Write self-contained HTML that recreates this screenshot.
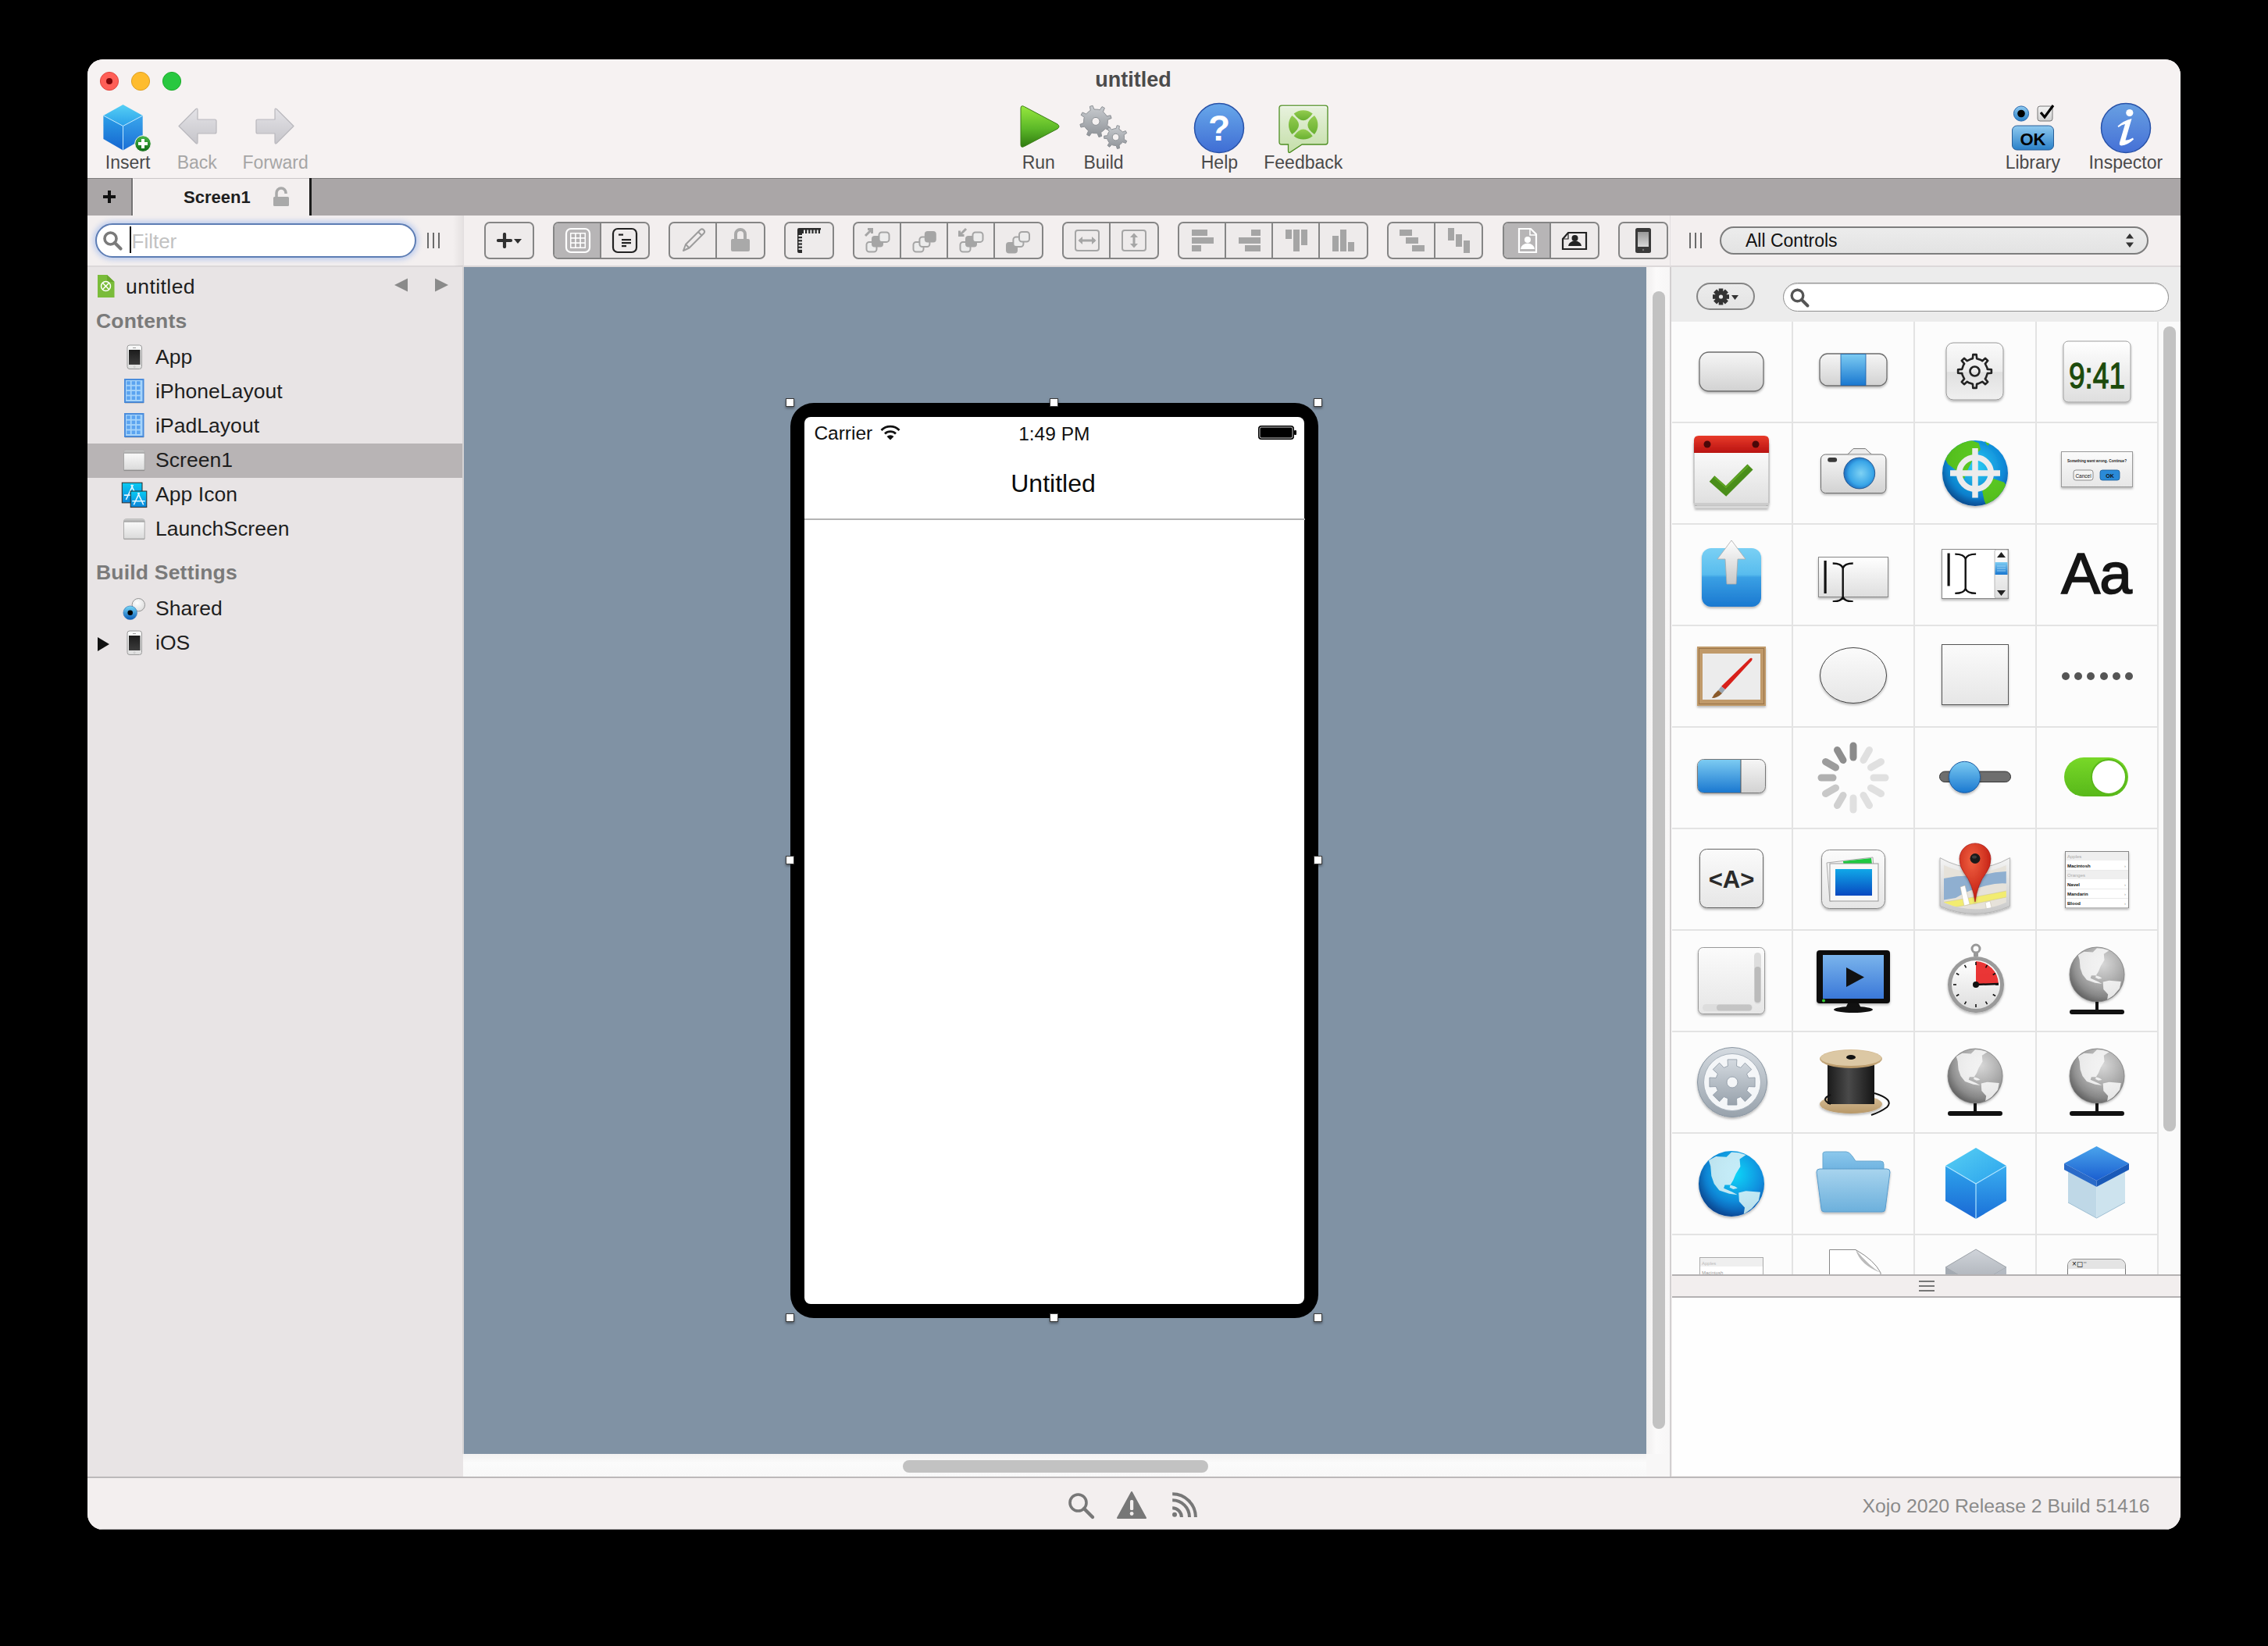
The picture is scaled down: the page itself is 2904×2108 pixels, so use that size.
<!DOCTYPE html>
<html><head><meta charset="utf-8">
<style>
html,body{margin:0;padding:0;background:#000;width:2904px;height:2108px;overflow:hidden}
*{box-sizing:border-box}
body{font-family:"Liberation Sans",sans-serif;color:#222}
.win{position:absolute;left:112px;top:76px;width:2680px;height:1883px;border-radius:20px;overflow:hidden;background:#f4f0f0}
.pg{position:absolute;left:-112px;top:-76px;width:2904px;height:2108px}
.a{position:absolute}
.t{position:absolute;white-space:nowrap;line-height:1}
svg text{font-family:"Liberation Sans",sans-serif}
</style></head><body>
<div class="win"><div class="pg">
<div class="a" style="left:112px;top:76px;width:2680px;height:152px;background:#f6f2f2"></div>
<svg class="a" style="left:126px;top:90px;" width="108" height="28" viewBox="0 0 108 28"><circle cx="14" cy="14" r="11.6" fill="#ff5f57" stroke="#e2463f" stroke-width="1"/><circle cx="14" cy="14" r="4" fill="#7e0508"/><circle cx="54" cy="14" r="11.6" fill="#febc2e" stroke="#dfa023" stroke-width="1"/><circle cx="94" cy="14" r="11.6" fill="#28c840" stroke="#1dad2b" stroke-width="1"/></svg>
<div class="t" style="left:951px;width:1000px;text-align:center;top:89.1px;font-size:27px;color:#4b4b4b;font-weight:bold;">untitled</div>
<div class="t" style="left:-336.4px;width:1000px;text-align:center;top:196.5px;font-size:23px;color:#4a4a4a;font-weight:normal;">Insert</div>
<div class="t" style="left:-247.8px;width:1000px;text-align:center;top:196.5px;font-size:23px;color:#a6a6a6;font-weight:normal;">Back</div>
<div class="t" style="left:-147.39999999999998px;width:1000px;text-align:center;top:196.5px;font-size:23px;color:#a6a6a6;font-weight:normal;">Forward</div>
<div class="t" style="left:829.8px;width:1000px;text-align:center;top:196.5px;font-size:23px;color:#4a4a4a;font-weight:normal;">Run</div>
<div class="t" style="left:913px;width:1000px;text-align:center;top:196.5px;font-size:23px;color:#4a4a4a;font-weight:normal;">Build</div>
<div class="t" style="left:1061.4px;width:1000px;text-align:center;top:196.5px;font-size:23px;color:#4a4a4a;font-weight:normal;">Help</div>
<div class="t" style="left:1168.8px;width:1000px;text-align:center;top:196.5px;font-size:23px;color:#4a4a4a;font-weight:normal;">Feedback</div>
<div class="t" style="left:2102.8px;width:1000px;text-align:center;top:196.5px;font-size:23px;color:#4a4a4a;font-weight:normal;">Library</div>
<div class="t" style="left:2221.8px;width:1000px;text-align:center;top:196.5px;font-size:23px;color:#4a4a4a;font-weight:normal;">Inspector</div>
<svg class="a" style="left:126px;top:128px;" width="70" height="72" viewBox="0 0 70 72"><defs><linearGradient id="cubeT" x1="0" y1="0" x2="0" y2="1"><stop offset="0" stop-color="#56d0f5"/><stop offset="1" stop-color="#2aa0ea"/></linearGradient><linearGradient id="cubeL" x1="0" y1="0" x2="0" y2="1"><stop offset="0" stop-color="#2c9fe8"/><stop offset="1" stop-color="#1565d0"/></linearGradient><linearGradient id="cubeR" x1="0" y1="0" x2="0" y2="1"><stop offset="0" stop-color="#3aa6ec"/><stop offset="1" stop-color="#1a6fd6"/></linearGradient><linearGradient id="plusG" x1="0" y1="0" x2="0" y2="1"><stop offset="0" stop-color="#4cb84a"/><stop offset="1" stop-color="#0d6a14"/></linearGradient></defs><polygon points="31.5,6 56.7,20 31.5,33.4 6.4,20" fill="url(#cubeT)"/><polygon points="6.4,20 31.5,33.4 31.5,64.5 6.4,50" fill="url(#cubeL)"/><polygon points="31.5,33.4 56.7,20 56.7,50 31.5,64.5" fill="url(#cubeR)"/><polyline points="6.4,20 31.5,33.4 56.7,20" fill="none" stroke="#bfe8ff" stroke-width="1"/><line x1="31.5" y1="33.4" x2="31.5" y2="64.5" stroke="#bfe8ff" stroke-width="1"/><circle cx="57" cy="56" r="10.3" fill="url(#plusG)" stroke="#f5f1f1" stroke-width="1"/><path d="M57 50v12M51 56h12" stroke="#fff" stroke-width="4"/></svg>
<svg class="a" style="left:226px;top:136px;" width="54" height="52" viewBox="0 0 54 52"><defs><linearGradient id="arG" x1="0" y1="0" x2="0" y2="1"><stop offset="0" stop-color="#e4e3e7"/><stop offset="1" stop-color="#c6c5ca"/></linearGradient></defs><path d="M3 25.5 L25 3.5 Q27 2 27 5 V17 H49 Q51 17 51 19 V33 Q51 35 49 35 H27 V46 Q27 49 25 47.5 Z" fill="url(#arG)" stroke="#b9b8bd" stroke-width="1.2" stroke-linejoin="round"/></svg>
<svg class="a" style="left:325px;top:136px;" width="54" height="52" viewBox="0 0 54 52"><path d="M51 25.5 L29 3.5 Q27 2 27 5 V17 H5 Q3 17 3 19 V33 Q3 35 5 35 H27 V46 Q27 49 29 47.5 Z" fill="url(#arG)" stroke="#b9b8bd" stroke-width="1.2" stroke-linejoin="round"/></svg>
<svg class="a" style="left:1303px;top:132px;" width="58" height="62" viewBox="0 0 58 62"><defs><linearGradient id="runG" x1="0" y1="0" x2="0" y2="1"><stop offset="0" stop-color="#97e83e"/><stop offset="0.55" stop-color="#5cb828"/><stop offset="1" stop-color="#2f7a10"/></linearGradient></defs><path d="M4 7 Q4 2 8.5 4.5 L51 27 Q55 30 51 33 L8.5 55.5 Q4 58 4 53 Z" fill="url(#runG)" stroke="#3c7d18" stroke-width="1"/></svg>
<svg class="a" style="left:1378px;top:130px;" width="70" height="64" viewBox="0 0 70 64"><defs><linearGradient id="gearG" x1="0" y1="0" x2="0" y2="1"><stop offset="0" stop-color="#c9ccd0"/><stop offset="1" stop-color="#8e9297"/></linearGradient></defs><polygon points="40.19,28.48 39.61,30.59 43.85,33.46 42.00,36.85 37.29,34.85 33.56,38.32 33.56,38.32 31.66,39.40 32.63,44.43 28.93,45.52 27.01,40.77 21.92,40.59 21.92,40.59 19.81,40.01 16.94,44.25 13.55,42.40 15.55,37.69 12.08,33.96 12.08,33.96 11.00,32.06 5.97,33.03 4.88,29.33 9.63,27.41 9.81,22.32 9.81,22.32 10.39,20.21 6.15,17.34 8.00,13.95 12.71,15.95 16.44,12.48 16.44,12.48 18.34,11.40 17.37,6.37 21.07,5.28 22.99,10.03 28.08,10.21 28.08,10.21 30.19,10.79 33.06,6.55 36.45,8.40 34.45,13.11 37.92,16.84 37.92,16.84 39.00,18.74 44.03,17.77 45.12,21.47 40.37,23.39 40.19,28.48" fill="url(#gearG)" stroke="#8d9196" stroke-width="1"/><circle cx="25" cy="25.4" r="5" fill="#f5f1f1" stroke="#8d9196" stroke-width="1"/><polygon points="61.55,46.70 61.23,48.44 64.77,50.51 63.40,53.42 59.55,52.00 56.57,54.84 56.57,54.84 55.00,55.68 55.60,59.74 52.46,60.48 51.18,56.58 47.09,56.03 47.09,56.03 45.46,55.33 42.66,58.33 40.12,56.34 42.37,52.90 40.26,49.36 40.26,49.36 39.79,47.65 35.70,47.33 35.67,44.10 39.76,43.72 41.22,39.86 41.22,39.86 42.26,38.43 39.96,35.03 42.47,33.00 45.31,35.95 49.24,34.69 49.24,34.69 51.01,34.61 52.23,30.69 55.38,31.38 54.85,35.45 58.28,37.73 58.28,37.73 59.45,39.07 63.28,37.58 64.70,40.47 61.18,42.59 61.55,46.70" fill="url(#gearG)" stroke="#8d9196" stroke-width="1"/><circle cx="50.6" cy="45.6" r="4.3" fill="#f5f1f1" stroke="#8d9196" stroke-width="1"/></svg>
<svg class="a" style="left:1527px;top:130px;" width="68" height="68" viewBox="0 0 68 68"><defs><linearGradient id="helpG" x1="0" y1="0" x2="0" y2="1"><stop offset="0" stop-color="#68a8ea"/><stop offset="1" stop-color="#3f6dd4"/></linearGradient></defs><circle cx="34" cy="34" r="31.5" fill="url(#helpG)" stroke="#2852a8" stroke-width="1.5"/><text x="34" y="50" text-anchor="middle" font-family="Liberation Sans" font-weight="bold" font-size="46" fill="#fff">?</text></svg>
<svg class="a" style="left:1636px;top:133px;" width="68" height="66" viewBox="0 0 68 66"><defs><linearGradient id="fbG" x1="0" y1="0" x2="0" y2="1"><stop offset="0" stop-color="#e8f2de"/><stop offset="1" stop-color="#c4dea8"/></linearGradient><linearGradient id="fbP" x1="0" y1="0" x2="0" y2="1"><stop offset="0" stop-color="#94cc50"/><stop offset="1" stop-color="#68b030"/></linearGradient></defs><path d="M5 2.2 H61 Q64 2.2 64 5.2 V49 Q64 52 61 52 H31.2 L15.5 62.4 Q13.5 62.8 13.5 60 V52 H5 Q2 52 2 49 V5.2 Q2 2.2 5 2.2 Z" fill="url(#fbG)" stroke="#4e8e22" stroke-width="1.3"/><path d="M5.5 3.6 H60.5 Q62.6 3.6 62.6 5.8" fill="none" stroke="#fff" stroke-width="1"/><path d="M20.68 12.57 A18.7 18.7 0 0 1 44.72 12.57 Q32.70 29.90 20.68 12.57 Z" fill="url(#fbP)"/><path d="M47.03 14.88 A18.7 18.7 0 0 1 47.03 38.92 Q29.70 26.90 47.03 14.88 Z" fill="url(#fbP)"/><path d="M44.72 41.23 A18.7 18.7 0 0 1 20.68 41.23 Q32.70 23.90 44.72 41.23 Z" fill="url(#fbP)"/><path d="M18.37 38.92 A18.7 18.7 0 0 1 18.37 14.88 Q35.70 26.90 18.37 38.92 Z" fill="url(#fbP)"/></svg>
<svg class="a" style="left:2572px;top:130px;" width="64" height="66" viewBox="0 0 64 66"><defs><linearGradient id="libB" x1="0" y1="0" x2="0" y2="1"><stop offset="0" stop-color="#8fcaf0"/><stop offset="1" stop-color="#2a80c8"/></linearGradient><linearGradient id="libC" x1="0" y1="0" x2="0" y2="1"><stop offset="0" stop-color="#f4f4f4"/><stop offset="1" stop-color="#cfcfcf"/></linearGradient></defs><circle cx="16" cy="15.5" r="9.6" fill="url(#libB)" stroke="#2a6ab0" stroke-width="1"/><circle cx="16" cy="15.5" r="4.8" fill="#000"/><rect x="37" y="6" width="19" height="19" rx="3" fill="url(#libC)" stroke="#777" stroke-width="1"/><path d="M41 14 L46 20 L57 5" fill="none" stroke="#000" stroke-width="3.2"/><rect x="4.5" y="31" width="53" height="31" rx="6" fill="url(#libB)" stroke="#2a5f98" stroke-width="1"/><text x="31" y="56" text-anchor="middle" font-family="Liberation Sans" font-weight="bold" font-size="22" fill="#000">OK</text></svg>
<svg class="a" style="left:2688px;top:130px;" width="68" height="68" viewBox="0 0 68 68"><defs><linearGradient id="insG" x1="0" y1="0" x2="0" y2="1"><stop offset="0" stop-color="#68a0e2"/><stop offset="1" stop-color="#4570d6"/></linearGradient></defs><circle cx="34" cy="34" r="31.5" fill="url(#insG)" stroke="#2852a8" stroke-width="1.5"/><circle cx="38.8" cy="14.5" r="4.6" fill="#fff"/><path d="M23.5 31.5 Q31 24.5 41.5 22 L33.5 49.5 Q37 50 43 46.5 L44 48.5 Q36 56 28.5 56.5 Q25 56.5 26 52.5 L33 29 Q29 29.5 24.5 33 Z" fill="#fff"/></svg>
<div class="a" style="left:112px;top:228px;width:2680px;height:48px;background:#aaa6a7"></div>
<div class="a" style="left:112px;top:228px;width:2680px;height:1px;background:#7d7b7b"></div>
<div class="a" style="left:168px;top:228px;width:2px;height:48px;background:#747273"></div>
<div class="a" style="left:170px;top:228px;width:226px;height:48px;background:#f3efef;border-top:1px solid #cbc7c8;border-left:1px solid #fcf9f9"></div>
<div class="a" style="left:396px;top:228px;width:2.5px;height:48px;background:#1c1c1c"></div>
<svg class="a" style="left:130px;top:242px;" width="20" height="20" viewBox="0 0 20 20"><path d="M10 2v16M2 10h16" stroke="#111" stroke-width="4"/></svg>
<div class="t" style="left:235px;top:242.4px;font-size:22px;color:#1e1e1e;font-weight:bold;">Screen1</div>
<svg class="a" style="left:348px;top:238px;" width="24" height="28" viewBox="0 0 24 28"><path d="M6 14 V9 A6 6 0 0 1 18 9 V10" fill="none" stroke="#a9a9a9" stroke-width="3.5"/><rect x="2" y="14" width="20" height="12" rx="1.5" fill="#a9a9a9"/></svg>
<div class="a" style="left:112px;top:276px;width:2680px;height:65px;background:#f3efef"></div>
<div class="a" style="left:112px;top:340px;width:2680px;height:2px;background:#dcd8d9"></div>
<div class="a" style="left:580px;top:276px;width:13px;height:65px;background:linear-gradient(to right,rgba(0,0,0,0),rgba(0,0,0,0.06))"></div>
<div class="a" style="left:593px;top:276px;width:1px;height:65px;background:#e2dedf"></div>
<div class="a" style="left:2138px;top:276px;width:1px;height:65px;background:#e2dedf"></div>
<div class="a" style="left:122px;top:286px;width:411px;height:44px;background:#fff;border:2px solid #5d7db4;border-radius:22px;box-shadow:0 0 6px 3px rgba(120,160,235,0.42)"></div>
<svg class="a" style="left:130px;top:294px;" width="30" height="30" viewBox="0 0 30 30"><circle cx="11.5" cy="11.5" r="7.5" fill="none" stroke="#7a7a7a" stroke-width="3.6"/><path d="M17 17 L24.5 24.5" stroke="#7a7a7a" stroke-width="4.2" stroke-linecap="round"/></svg>
<div class="a" style="left:166px;top:290px;width:2px;height:34px;background:#000"></div>
<div class="t" style="left:168.5px;top:296.0px;font-size:26px;color:#c2c2c2;font-weight:normal;">Filter</div>
<div class="a" style="left:547px;top:298px;width:2px;height:20px;background:#6b6b6b"></div>
<div class="a" style="left:554px;top:298px;width:2px;height:20px;background:#6b6b6b"></div>
<div class="a" style="left:561px;top:298px;width:2px;height:20px;background:#6b6b6b"></div>
<div class="a" style="left:2163px;top:298px;width:2px;height:20px;background:#6b6b6b"></div>
<div class="a" style="left:2170px;top:298px;width:2px;height:20px;background:#6b6b6b"></div>
<div class="a" style="left:2177px;top:298px;width:2px;height:20px;background:#6b6b6b"></div>
<div class="a" style="left:620px;top:284px;width:64px;height:48px;background:#eeebeb;border:2px solid #858585;border-radius:7px"></div>
<svg class="a" style="left:636px;top:298px;" width="36" height="20" viewBox="0 0 36 20"><path d="M10 2v16M2 10h16" stroke="#303030" stroke-width="4.2" stroke-linecap="round"/><path d="M22 8 H32 L27 14 Z" fill="#303030"/></svg>
<div class="a" style="left:708px;top:284px;width:124px;height:48px;background:#eeebeb;border:2px solid #858585;border-radius:7px;overflow:hidden"></div>
<div class="a" style="left:710px;top:286px;width:59px;height:44px;background:#b7b5b6;border-radius:5px 0 0 5px"></div>
<div class="a" style="left:768px;top:285px;width:2px;height:46px;background:#858585"></div>
<svg class="a" style="left:722px;top:290px;" width="36" height="36" viewBox="0 0 36 36"><rect x="3" y="3" width="30" height="30" rx="6" fill="none" stroke="#fff" stroke-width="2.2"/><rect x="8" y="8" width="20" height="20" fill="#fff"/><rect x="9.5" y="9.5" width="4.6" height="4.6" fill="#b2b0b1"/><rect x="9.5" y="15.7" width="4.6" height="4.6" fill="#b2b0b1"/><rect x="9.5" y="21.9" width="4.6" height="4.6" fill="#b2b0b1"/><rect x="15.7" y="9.5" width="4.6" height="4.6" fill="#b2b0b1"/><rect x="15.7" y="15.7" width="4.6" height="4.6" fill="#b2b0b1"/><rect x="15.7" y="21.9" width="4.6" height="4.6" fill="#b2b0b1"/><rect x="21.9" y="9.5" width="4.6" height="4.6" fill="#b2b0b1"/><rect x="21.9" y="15.7" width="4.6" height="4.6" fill="#b2b0b1"/><rect x="21.9" y="21.9" width="4.6" height="4.6" fill="#b2b0b1"/></svg>
<svg class="a" style="left:782px;top:290px;" width="36" height="36" viewBox="0 0 36 36"><rect x="3" y="3" width="30" height="30" rx="6" fill="none" stroke="#222" stroke-width="2.2"/><rect x="10" y="9.5" width="6" height="2.2" fill="#222"/><rect x="14" y="16" width="12" height="2.2" fill="#222"/><rect x="14" y="20" width="12" height="2.2" fill="#222"/><rect x="14" y="24" width="6" height="2.2" fill="#222"/></svg>
<div class="a" style="left:856px;top:284px;width:124px;height:48px;background:#eeebeb;border:2px solid #858585;border-radius:7px;overflow:hidden"></div>
<div class="a" style="left:916px;top:285px;width:2px;height:46px;background:#858585"></div>
<svg class="a" style="left:870px;top:290px;" width="36" height="36" viewBox="0 0 36 36"><path d="M5 31 L8 23 L27 4 Q29 2.5 31 4.5 Q33 6.5 31.5 8.5 L12.5 27.5 Z M8 23 L12.5 27.5 M24 7 L28.5 11.5" fill="none" stroke="#9c9c9c" stroke-width="2" stroke-linejoin="round"/></svg>
<svg class="a" style="left:932px;top:290px;" width="32" height="36" viewBox="0 0 32 36"><path d="M10 17 V10 A6 6 0 0 1 22 10 V17" fill="none" stroke="#a9a9a9" stroke-width="4"/><rect x="4" y="16" width="24" height="16" rx="2" fill="#a9a9a9"/></svg>
<div class="a" style="left:1004px;top:284px;width:64px;height:48px;background:#eeebeb;border:2px solid #858585;border-radius:7px"></div>
<svg class="a" style="left:1019px;top:291px;" width="34" height="34" viewBox="0 0 34 34"><path d="M2 3 Q2 1 4 1 H32 V8 H8 V33 H4 Q2 33 2 31 Z" fill="#2b2b2b"/><rect x="10.0" y="3.5" width="2" height="4.5" fill="#ececec"/><rect x="14.2" y="3.5" width="2" height="4.5" fill="#ececec"/><rect x="18.4" y="3.5" width="2" height="4.5" fill="#ececec"/><rect x="22.6" y="3.5" width="2" height="4.5" fill="#ececec"/><rect x="26.8" y="3.5" width="2" height="4.5" fill="#ececec"/><rect x="31.0" y="3.5" width="2" height="4.5" fill="#ececec"/><rect x="3.5" y="10.0" width="4.5" height="2" fill="#ececec"/><rect x="3.5" y="14.2" width="4.5" height="2" fill="#ececec"/><rect x="3.5" y="18.4" width="4.5" height="2" fill="#ececec"/><rect x="3.5" y="22.6" width="4.5" height="2" fill="#ececec"/><rect x="3.5" y="26.8" width="4.5" height="2" fill="#ececec"/></svg>
<div class="a" style="left:1092px;top:284px;width:244px;height:48px;background:#eeebeb;border:2px solid #858585;border-radius:7px;overflow:hidden"></div>
<div class="a" style="left:1152px;top:285px;width:2px;height:46px;background:#858585"></div>
<div class="a" style="left:1212px;top:285px;width:2px;height:46px;background:#858585"></div>
<div class="a" style="left:1272px;top:285px;width:2px;height:46px;background:#858585"></div>
<svg class="a" style="left:1104px;top:290px;" width="40" height="36" viewBox="0 0 40 36"><rect x="5.5" y="20" width="13" height="12.5" rx="3.5" fill="#ececec" stroke="#a5a5a5" stroke-width="2"/><rect x="12" y="12" width="15" height="14.5" rx="4" fill="#a5a5a5"/><rect x="21.5" y="7.4" width="13" height="12.5" rx="3.5" fill="#ececec" stroke="#a5a5a5" stroke-width="2"/><path d="M4 12 L12 4 M7 3.5 H12.5 V9" fill="none" stroke="#a5a5a5" stroke-width="3"/></svg>
<svg class="a" style="left:1164px;top:290px;" width="40" height="36" viewBox="0 0 40 36"><rect x="5.5" y="20" width="13" height="12.5" rx="3.5" fill="#ececec" stroke="#a5a5a5" stroke-width="2"/><rect x="13.4" y="13.5" width="13" height="12.5" rx="3.5" fill="#ececec" stroke="#a5a5a5" stroke-width="2"/><rect x="19.8" y="6" width="15" height="14.5" rx="4" fill="#a5a5a5"/></svg>
<svg class="a" style="left:1224px;top:290px;" width="40" height="36" viewBox="0 0 40 36"><rect x="5.5" y="20" width="13" height="12.5" rx="3.5" fill="#ececec" stroke="#a5a5a5" stroke-width="2"/><rect x="12" y="12" width="15" height="14.5" rx="4" fill="#a5a5a5"/><rect x="21.5" y="7.4" width="13" height="12.5" rx="3.5" fill="#ececec" stroke="#a5a5a5" stroke-width="2"/><path d="M13 3 L5 11 M4.5 5.5 V11.5 H10.5" fill="none" stroke="#a5a5a5" stroke-width="3"/></svg>
<svg class="a" style="left:1284px;top:290px;" width="40" height="36" viewBox="0 0 40 36"><rect x="4" y="20" width="15" height="14.5" rx="4" fill="#a5a5a5"/><rect x="13.4" y="13.5" width="13" height="12.5" rx="3.5" fill="#ececec" stroke="#a5a5a5" stroke-width="2"/><rect x="21" y="7" width="13" height="12.5" rx="3.5" fill="#ececec" stroke="#a5a5a5" stroke-width="2"/></svg>
<div class="a" style="left:1360px;top:284px;width:124px;height:48px;background:#eeebeb;border:2px solid #858585;border-radius:7px;overflow:hidden"></div>
<div class="a" style="left:1420px;top:285px;width:2px;height:46px;background:#858585"></div>
<svg class="a" style="left:1374px;top:292px;" width="36" height="32" viewBox="0 0 36 32"><rect x="3" y="3" width="30" height="26" rx="3" fill="none" stroke="#a5a5a5" stroke-width="2"/><path d="M8 16 H28" stroke="#a5a5a5" stroke-width="3"/><path d="M6.5 16 L12 11 V21 Z M29.5 16 L24 11 V21 Z" fill="#a5a5a5"/></svg>
<svg class="a" style="left:1434px;top:292px;" width="36" height="32" viewBox="0 0 36 32"><rect x="3" y="3" width="30" height="26" rx="3" fill="none" stroke="#a5a5a5" stroke-width="2"/><path d="M18 9 V23" stroke="#a5a5a5" stroke-width="3"/><path d="M18 6.5 L13 12 H23 Z M18 25.5 L13 20 H23 Z" fill="#a5a5a5"/></svg>
<div class="a" style="left:1508px;top:284px;width:244px;height:48px;background:#eeebeb;border:2px solid #858585;border-radius:7px;overflow:hidden"></div>
<div class="a" style="left:1568px;top:285px;width:2px;height:46px;background:#858585"></div>
<div class="a" style="left:1628px;top:285px;width:2px;height:46px;background:#858585"></div>
<div class="a" style="left:1688px;top:285px;width:2px;height:46px;background:#858585"></div>
<div class="a" style="left:1526px;top:294px;width:20px;height:8px;background:#a5a5a5"></div>
<div class="a" style="left:1526px;top:304px;width:28px;height:8px;background:#a5a5a5"></div>
<div class="a" style="left:1526px;top:314px;width:12px;height:8px;background:#a5a5a5"></div>
<div class="a" style="left:1602px;top:294px;width:12px;height:8px;background:#a5a5a5"></div>
<div class="a" style="left:1586px;top:304px;width:28px;height:8px;background:#a5a5a5"></div>
<div class="a" style="left:1594px;top:314px;width:20px;height:8px;background:#a5a5a5"></div>
<div class="a" style="left:1646px;top:294px;width:8px;height:12px;background:#a5a5a5"></div>
<div class="a" style="left:1656px;top:294px;width:8px;height:28px;background:#a5a5a5"></div>
<div class="a" style="left:1666px;top:294px;width:8px;height:20px;background:#a5a5a5"></div>
<div class="a" style="left:1706px;top:302px;width:8px;height:20px;background:#a5a5a5"></div>
<div class="a" style="left:1716px;top:294px;width:8px;height:28px;background:#a5a5a5"></div>
<div class="a" style="left:1726px;top:310px;width:8px;height:12px;background:#a5a5a5"></div>
<div class="a" style="left:1776px;top:284px;width:123px;height:48px;background:#eeebeb;border:2px solid #858585;border-radius:7px;overflow:hidden"></div>
<div class="a" style="left:1836px;top:285px;width:2px;height:46px;background:#858585"></div>
<div class="a" style="left:1792px;top:294px;width:16px;height:8px;background:#a5a5a5"></div>
<div class="a" style="left:1800px;top:304px;width:16px;height:8px;background:#a5a5a5"></div>
<div class="a" style="left:1808px;top:314px;width:16px;height:8px;background:#a5a5a5"></div>
<div class="a" style="left:1854px;top:292px;width:8px;height:16px;background:#a5a5a5"></div>
<div class="a" style="left:1864px;top:300px;width:8px;height:16px;background:#a5a5a5"></div>
<div class="a" style="left:1874px;top:308px;width:8px;height:16px;background:#a5a5a5"></div>
<div class="a" style="left:1924px;top:284px;width:124px;height:48px;background:#eeebeb;border:2px solid #858585;border-radius:7px;overflow:hidden"></div>
<div class="a" style="left:1926px;top:286px;width:59px;height:44px;background:#b7b5b6;border-radius:5px 0 0 5px"></div>
<div class="a" style="left:1984px;top:285px;width:2px;height:46px;background:#858585"></div>
<svg class="a" style="left:1942px;top:290px;" width="28" height="36" viewBox="0 0 28 36"><path d="M3 3 H18 L25 10 V33 H3 Z" fill="none" stroke="#fff" stroke-width="2.2"/><path d="M17 3 V11 H25" fill="none" stroke="#fff" stroke-width="1.5"/><circle cx="14" cy="17" r="4" fill="#fff"/><path d="M5 29 Q6 22 14 21.5 Q22 22 23 29 Z" fill="#fff"/></svg>
<svg class="a" style="left:1998px;top:294px;" width="36" height="28" viewBox="0 0 36 28"><path d="M3 12 L10 4 H33 V25 H3 Z" fill="none" stroke="#222" stroke-width="2.2"/><path d="M10 4 V12 H3" fill="none" stroke="#222" stroke-width="1.2"/><circle cx="18.5" cy="11" r="4" fill="#222"/><path d="M10 21 Q11 15 18.5 14.5 Q26 15 27 21 Z" fill="#222"/></svg>
<div class="a" style="left:2072px;top:284px;width:64px;height:48px;background:#eeebeb;border:2px solid #858585;border-radius:7px"></div>
<svg class="a" style="left:2092px;top:290px;" width="24" height="36" viewBox="0 0 24 36"><defs><linearGradient id="phS" x1="0" y1="0" x2="0" y2="1"><stop offset="0" stop-color="#9a9a9a"/><stop offset="1" stop-color="#d8d8d8"/></linearGradient></defs><rect x="2" y="2" width="20" height="32" rx="2.5" fill="#3a3a3a"/><rect x="5" y="7" width="14" height="19" fill="url(#phS)"/><circle cx="12" cy="30" r="1.2" fill="#777"/></svg>
<div class="a" style="left:2202px;top:290px;width:549px;height:36px;background:linear-gradient(#ececec,#e3e3e3);border:2px solid #7d7d7d;border-radius:18px"></div>
<div class="t" style="left:2235px;top:296.5px;font-size:23px;color:#111;font-weight:normal;">All Controls</div>
<svg class="a" style="left:2718px;top:296px;" width="18" height="24" viewBox="0 0 18 24"><path d="M9 3 L14 9.5 H4 Z M9 21 L14 14.5 H4 Z" fill="#333"/></svg>
<div class="a" style="left:112px;top:342px;width:481px;height:1550px;background:#e8e4e5"></div>
<svg class="a" style="left:124px;top:351px;" width="24" height="31" viewBox="0 0 24 31"><path d="M1 1 H13 L22.5 10 V30 H1 Z" fill="#7abc3a"/><path d="M13 1 L22.5 10 H16 Q13 10 13 7 Z" fill="#6aa82e"/><circle cx="11.5" cy="15.5" r="6" fill="none" stroke="#fff" stroke-width="1.5"/><path d="M7.3 11.3 L15.7 19.7 M15.7 11.3 L7.3 19.7" stroke="#fff" stroke-width="1.5"/></svg>
<div class="t" style="left:161px;top:353.6px;font-size:26.5px;color:#1e1e1e;font-weight:normal;letter-spacing:0.45px;">untitled</div>
<svg class="a" style="left:503px;top:354px;" width="22" height="22" viewBox="0 0 22 22"><path d="M2 11 L19 2.5 V19.5 Z" fill="#8a8a8a"/></svg>
<svg class="a" style="left:554px;top:354px;" width="22" height="22" viewBox="0 0 22 22"><path d="M20 11 L3 2.5 V19.5 Z" fill="#8a8a8a"/></svg>
<div class="t" style="left:123px;top:397.6px;font-size:26.5px;color:#7a7a7a;font-weight:bold;letter-spacing:0.2px;">Contents</div>
<div class="t" style="left:123px;top:719.6px;font-size:26.5px;color:#7a7a7a;font-weight:bold;letter-spacing:0.2px;">Build Settings</div>
<div class="a" style="left:112px;top:568px;width:480px;height:44px;background:#b8b4b5"></div>
<div class="t" style="left:199px;top:443.6px;font-size:26.5px;color:#1e1e1e;font-weight:normal;letter-spacing:0.05px;">App</div>
<div class="t" style="left:199px;top:488.1px;font-size:26.5px;color:#1e1e1e;font-weight:normal;letter-spacing:0.05px;">iPhoneLayout</div>
<div class="t" style="left:199px;top:532.1px;font-size:26.5px;color:#1e1e1e;font-weight:normal;letter-spacing:0.05px;">iPadLayout</div>
<div class="t" style="left:199px;top:576.1px;font-size:26.5px;color:#1e1e1e;font-weight:normal;letter-spacing:0.05px;">Screen1</div>
<div class="t" style="left:199px;top:620.1px;font-size:26.5px;color:#1e1e1e;font-weight:normal;letter-spacing:0.05px;">App Icon</div>
<div class="t" style="left:199px;top:664.1px;font-size:26.5px;color:#1e1e1e;font-weight:normal;letter-spacing:0.05px;">LaunchScreen</div>
<div class="t" style="left:199px;top:765.6px;font-size:26.5px;color:#1e1e1e;font-weight:normal;letter-spacing:0.05px;">Shared</div>
<div class="t" style="left:199px;top:809.6px;font-size:26.5px;color:#1e1e1e;font-weight:normal;letter-spacing:0.05px;">iOS</div>
<svg class="a" style="left:161px;top:440px;" width="22" height="34" viewBox="0 0 22 34"><defs><linearGradient id="phB" x1="0" y1="0" x2="0" y2="1"><stop offset="0" stop-color="#fafafa"/><stop offset="1" stop-color="#dedede"/></linearGradient><linearGradient id="phScr" x1="0" y1="0" x2="0" y2="1"><stop offset="0" stop-color="#1c1c1c"/><stop offset="1" stop-color="#3c3c3c"/></linearGradient></defs><rect x="2" y="2" width="18.5" height="30.5" rx="3" fill="url(#phB)" stroke="#9a9a9a" stroke-width="1"/><rect x="4" y="8" width="14.5" height="19" fill="url(#phScr)"/><rect x="9" y="5" width="4" height="0.8" fill="#888"/><circle cx="11.2" cy="29.8" r="1" fill="none" stroke="#bbb" stroke-width="0.6"/></svg>
<svg class="a" style="left:159px;top:485px;" width="26" height="33" viewBox="0 0 26 33"><rect x="1" y="1" width="23.5" height="29" fill="#a6d4fa" stroke="#4a8cdc" stroke-width="2"/><rect x="3.2" y="3.2" width="4.6" height="4.6" fill="#5ba4f0"/><rect x="3.2" y="9.600000000000001" width="4.6" height="4.6" fill="#5ba4f0"/><rect x="3.2" y="16.0" width="4.6" height="4.6" fill="#5ba4f0"/><rect x="3.2" y="22.400000000000002" width="4.6" height="4.6" fill="#5ba4f0"/><rect x="9.600000000000001" y="3.2" width="4.6" height="4.6" fill="#5ba4f0"/><rect x="9.600000000000001" y="9.600000000000001" width="4.6" height="4.6" fill="#5ba4f0"/><rect x="9.600000000000001" y="16.0" width="4.6" height="4.6" fill="#5ba4f0"/><rect x="9.600000000000001" y="22.400000000000002" width="4.6" height="4.6" fill="#5ba4f0"/><rect x="16.0" y="3.2" width="4.6" height="4.6" fill="#5ba4f0"/><rect x="16.0" y="9.600000000000001" width="4.6" height="4.6" fill="#5ba4f0"/><rect x="16.0" y="16.0" width="4.6" height="4.6" fill="#5ba4f0"/><rect x="16.0" y="22.400000000000002" width="4.6" height="4.6" fill="#5ba4f0"/><rect x="1" y="30.5" width="24" height="1.5" fill="rgba(0,0,0,0.12)"/></svg>
<svg class="a" style="left:159px;top:529px;" width="26" height="33" viewBox="0 0 26 33"><rect x="1" y="1" width="23.5" height="29" fill="#a6d4fa" stroke="#4a8cdc" stroke-width="2"/><rect x="3.2" y="3.2" width="4.6" height="4.6" fill="#5ba4f0"/><rect x="3.2" y="9.600000000000001" width="4.6" height="4.6" fill="#5ba4f0"/><rect x="3.2" y="16.0" width="4.6" height="4.6" fill="#5ba4f0"/><rect x="3.2" y="22.400000000000002" width="4.6" height="4.6" fill="#5ba4f0"/><rect x="9.600000000000001" y="3.2" width="4.6" height="4.6" fill="#5ba4f0"/><rect x="9.600000000000001" y="9.600000000000001" width="4.6" height="4.6" fill="#5ba4f0"/><rect x="9.600000000000001" y="16.0" width="4.6" height="4.6" fill="#5ba4f0"/><rect x="9.600000000000001" y="22.400000000000002" width="4.6" height="4.6" fill="#5ba4f0"/><rect x="16.0" y="3.2" width="4.6" height="4.6" fill="#5ba4f0"/><rect x="16.0" y="9.600000000000001" width="4.6" height="4.6" fill="#5ba4f0"/><rect x="16.0" y="16.0" width="4.6" height="4.6" fill="#5ba4f0"/><rect x="16.0" y="22.400000000000002" width="4.6" height="4.6" fill="#5ba4f0"/><rect x="1" y="30.5" width="24" height="1.5" fill="rgba(0,0,0,0.12)"/></svg>
<svg class="a" style="left:157px;top:575px;" width="30" height="30" viewBox="0 0 30 30"><defs><linearGradient id="scG" x1="0" y1="0" x2="0" y2="1"><stop offset="0" stop-color="#ffffff"/><stop offset="1" stop-color="#dadada"/></linearGradient><linearGradient id="scT" x1="0" y1="0" x2="0" y2="1"><stop offset="0" stop-color="#d0d0d0"/><stop offset="1" stop-color="#9c9c9c"/></linearGradient></defs><path d="M1.5 27 V4.7 Q1.5 1.7 4.5 1.7 H25.2 Q28.2 1.7 28.2 4.7 V27 Z" fill="url(#scG)" stroke="#9a9a9a" stroke-width="0.8"/><path d="M1.6 5.8 V4.7 Q1.6 1.8 4.5 1.8 H25.2 Q28.1 1.8 28.1 4.7 V5.8 Z" fill="url(#scT)"/><rect x="1.5" y="27" width="26.7" height="1.2" fill="rgba(0,0,0,0.15)"/></svg>
<svg class="a" style="left:155px;top:617px;" width="34" height="34" viewBox="0 0 34 34"><defs><linearGradient id="aiG" x1="0" y1="0" x2="0" y2="1"><stop offset="0" stop-color="#08ccf4"/><stop offset="1" stop-color="#0a84d8"/></linearGradient></defs><rect x="1.3" y="1.2" width="25.7" height="25.7" fill="url(#aiG)" stroke="#2a2a2a" stroke-width="1"/><path d="M6.4 23.0 L15.4 3.8 M12.9 3.8 L21.9 23.0 M3.9 17.1 H24.4" fill="none" stroke="#e4f6ff" stroke-width="1.6"/><rect x="12.2" y="12" width="20.6" height="20.6" fill="url(#aiG)" stroke="#2a2a2a" stroke-width="1"/><path d="M16.3 29.5 L23.5 14.1 M21.5 14.1 L28.7 29.5 M14.3 24.8 H30.7" fill="none" stroke="#e4f6ff" stroke-width="1.6"/></svg>
<svg class="a" style="left:157px;top:663px;" width="30" height="30" viewBox="0 0 30 30"><defs><linearGradient id="scG" x1="0" y1="0" x2="0" y2="1"><stop offset="0" stop-color="#ffffff"/><stop offset="1" stop-color="#dadada"/></linearGradient><linearGradient id="scT" x1="0" y1="0" x2="0" y2="1"><stop offset="0" stop-color="#d0d0d0"/><stop offset="1" stop-color="#9c9c9c"/></linearGradient></defs><path d="M1.5 27 V4.7 Q1.5 1.7 4.5 1.7 H25.2 Q28.2 1.7 28.2 4.7 V27 Z" fill="url(#scG)" stroke="#9a9a9a" stroke-width="0.8"/><path d="M1.6 5.8 V4.7 Q1.6 1.8 4.5 1.8 H25.2 Q28.1 1.8 28.1 4.7 V5.8 Z" fill="url(#scT)"/><rect x="1.5" y="27" width="26.7" height="1.2" fill="rgba(0,0,0,0.15)"/></svg>
<svg class="a" style="left:152px;top:762px;" width="36" height="36" viewBox="0 0 36 36"><defs><radialGradient id="shW" cx="0.4" cy="0.35" r="0.7"><stop offset="0" stop-color="#fff"/><stop offset="1" stop-color="#dcdcdc"/></radialGradient><linearGradient id="shB" x1="0" y1="0" x2="0" y2="1"><stop offset="0" stop-color="#78d8f6"/><stop offset="1" stop-color="#0a5cb8"/></linearGradient></defs><circle cx="25.3" cy="12.7" r="8.2" fill="url(#shW)" stroke="#8a8a8a" stroke-width="0.9"/><circle cx="14.7" cy="22.8" r="8.8" fill="url(#shB)" stroke="#2a6ab0" stroke-width="0.6"/><circle cx="14.7" cy="22.8" r="3.3" fill="#000"/></svg>
<svg class="a" style="left:161px;top:806px;" width="22" height="34" viewBox="0 0 22 34"><defs><linearGradient id="phB" x1="0" y1="0" x2="0" y2="1"><stop offset="0" stop-color="#fafafa"/><stop offset="1" stop-color="#dedede"/></linearGradient><linearGradient id="phScr" x1="0" y1="0" x2="0" y2="1"><stop offset="0" stop-color="#1c1c1c"/><stop offset="1" stop-color="#3c3c3c"/></linearGradient></defs><rect x="2" y="2" width="18.5" height="30.5" rx="3" fill="url(#phB)" stroke="#9a9a9a" stroke-width="1"/><rect x="4" y="8" width="14.5" height="19" fill="url(#phScr)"/><rect x="9" y="5" width="4" height="0.8" fill="#888"/><circle cx="11.2" cy="29.8" r="1" fill="none" stroke="#bbb" stroke-width="0.6"/></svg>
<svg class="a" style="left:122px;top:814px;" width="22" height="22" viewBox="0 0 22 22"><path d="M3 2 L18 11 L3 20 Z" fill="#111"/></svg>
<div class="a" style="left:593px;top:342px;width:1515px;height:1520px;background:#8092a4"></div>
<div class="a" style="left:592px;top:342px;width:2px;height:1520px;background:#d5d3d4"></div>
<div class="a" style="left:2108px;top:342px;width:31px;height:1520px;background:linear-gradient(to right,#f0eeee,#fbfafa 40%,#f7f6f6)"></div>
<div class="a" style="left:2116px;top:373px;width:16px;height:1457px;background:#c2c2c2;border-radius:8px"></div>
<div class="a" style="left:593px;top:1862px;width:1515px;height:29px;background:linear-gradient(#f2f1f1,#fbfbfb 40%,#f8f8f8)"></div>
<div class="a" style="left:2108px;top:1862px;width:30px;height:30px;background:#f8f7f7"></div>
<div class="a" style="left:1156px;top:1870px;width:391px;height:16px;background:#c2c2c2;border-radius:8px"></div>
<div class="a" style="left:1012px;top:516px;width:676px;height:1172px;background:#000;border-radius:30px"></div>
<div class="a" style="left:1030px;top:534px;width:640px;height:1136px;background:#fff;border-radius:8px"></div>
<div class="t" style="left:1042.4px;top:542.9px;font-size:24.5px;color:#111;font-weight:normal;">Carrier</div>
<svg class="a" style="left:1126px;top:543px;" width="28" height="22" viewBox="0 0 28 22"><path d="M2.5 8 A16 16 0 0 1 25.5 8" fill="none" stroke="#111" stroke-width="2.8"/><path d="M7 12.5 A10 10 0 0 1 21 12.5" fill="none" stroke="#111" stroke-width="2.8"/><path d="M14 20.5 L9.5 16 A6.5 6.5 0 0 1 18.5 16 Z" fill="#111"/></svg>
<div class="t" style="left:849.8px;width:1000px;text-align:center;top:543.9px;font-size:24.5px;color:#111;font-weight:normal;">1:49 PM</div>
<svg class="a" style="left:1608px;top:542px;" width="54" height="24" viewBox="0 0 54 24"><rect x="3.5" y="3.5" width="45" height="17" rx="3" fill="#000" stroke="#000" stroke-width="1"/><rect x="5" y="5" width="42" height="14" rx="2" fill="none" stroke="#fff" stroke-width="0.8"/><rect x="49" y="9" width="3" height="6" rx="1" fill="#000"/></svg>
<div class="t" style="left:848.5px;width:1000px;text-align:center;top:603.2px;font-size:32px;color:#0a0a0a;font-weight:normal;">Untitled</div>
<div class="a" style="left:1030px;top:664px;width:641px;height:2px;background:#b4b4b4"></div>
<div class="a" style="left:1006px;top:510px;width:11px;height:11px;background:#fff;border:1px solid #3a3a3a;box-shadow:0 2px 3px rgba(0,0,0,0.4)"></div>
<div class="a" style="left:1006px;top:1682px;width:11px;height:11px;background:#fff;border:1px solid #3a3a3a;box-shadow:0 2px 3px rgba(0,0,0,0.4)"></div>
<div class="a" style="left:1344px;top:510px;width:11px;height:11px;background:#fff;border:1px solid #3a3a3a;box-shadow:0 2px 3px rgba(0,0,0,0.4)"></div>
<div class="a" style="left:1344px;top:1682px;width:11px;height:11px;background:#fff;border:1px solid #3a3a3a;box-shadow:0 2px 3px rgba(0,0,0,0.4)"></div>
<div class="a" style="left:1681.5px;top:510px;width:11px;height:11px;background:#fff;border:1px solid #3a3a3a;box-shadow:0 2px 3px rgba(0,0,0,0.4)"></div>
<div class="a" style="left:1681.5px;top:1682px;width:11px;height:11px;background:#fff;border:1px solid #3a3a3a;box-shadow:0 2px 3px rgba(0,0,0,0.4)"></div>
<div class="a" style="left:1006px;top:1096px;width:11px;height:11px;background:#fff;border:1px solid #3a3a3a;box-shadow:0 2px 3px rgba(0,0,0,0.4)"></div>
<div class="a" style="left:1681.5px;top:1096px;width:11px;height:11px;background:#fff;border:1px solid #3a3a3a;box-shadow:0 2px 3px rgba(0,0,0,0.4)"></div>
<svg width="0" height="0" style="position:absolute"><defs><linearGradient id="gBtn" x1="0" y1="0" x2="0" y2="1"><stop offset="0" stop-color="#f6f6f6"/><stop offset="1" stop-color="#d2d2d2"/></linearGradient><linearGradient id="gBtn2" x1="0" y1="0" x2="0" y2="1"><stop offset="0" stop-color="#fafafa"/><stop offset="0.5" stop-color="#ececec"/><stop offset="0.52" stop-color="#e0e0e0"/><stop offset="1" stop-color="#f0f0f0"/></linearGradient><linearGradient id="gBlue" x1="0" y1="0" x2="0" y2="1"><stop offset="0" stop-color="#7ccbf2"/><stop offset="1" stop-color="#1a78d0"/></linearGradient><linearGradient id="gWhite" x1="0" y1="0" x2="0" y2="1"><stop offset="0" stop-color="#ffffff"/><stop offset="1" stop-color="#dedede"/></linearGradient><linearGradient id="gWhite2" x1="0" y1="0" x2="0" y2="1"><stop offset="0" stop-color="#fbfbfb"/><stop offset="1" stop-color="#e6e6e6"/></linearGradient><radialGradient id="gGlobeGray" cx="0.6" cy="0.3" r="0.75"><stop offset="0" stop-color="#d8d8d8"/><stop offset="0.6" stop-color="#a4a4a4"/><stop offset="1" stop-color="#767676"/></radialGradient><radialGradient id="gGlobeBlue" cx="0.55" cy="0.35" r="0.7"><stop offset="0" stop-color="#10d8f8"/><stop offset="0.6" stop-color="#0a8ee0"/><stop offset="1" stop-color="#0a4aa8"/></radialGradient><radialGradient id="gEarth" cx="0.5" cy="0.4" r="0.65"><stop offset="0" stop-color="#2ad0f4"/><stop offset="0.7" stop-color="#0a86d8"/><stop offset="1" stop-color="#0a4ca0"/></radialGradient><linearGradient id="gRed" x1="0" y1="0" x2="0" y2="1"><stop offset="0" stop-color="#e83a2a"/><stop offset="1" stop-color="#b00c0c"/></linearGradient><linearGradient id="gGreenSw" x1="0" y1="0" x2="0" y2="1"><stop offset="0" stop-color="#78d828"/><stop offset="1" stop-color="#58b81a"/></linearGradient><linearGradient id="gFolder" x1="0" y1="0" x2="0" y2="1"><stop offset="0" stop-color="#a8d4ee"/><stop offset="1" stop-color="#6cb0dc"/></linearGradient><linearGradient id="gFolderB" x1="0" y1="0" x2="0" y2="1"><stop offset="0" stop-color="#8cc8ec"/><stop offset="1" stop-color="#5aa4d8"/></linearGradient><linearGradient id="gCubeT" x1="0" y1="0" x2="1" y2="1"><stop offset="0" stop-color="#58d0f4"/><stop offset="1" stop-color="#2aa2ec"/></linearGradient><linearGradient id="gCubeL" x1="0" y1="0" x2="0" y2="1"><stop offset="0" stop-color="#2ea4ec"/><stop offset="1" stop-color="#1a68d4"/></linearGradient><linearGradient id="gCubeR" x1="0" y1="0" x2="0" y2="1"><stop offset="0" stop-color="#3aaef0"/><stop offset="1" stop-color="#1a70d8"/></linearGradient><linearGradient id="gLidT" x1="0" y1="0" x2="0" y2="1"><stop offset="0" stop-color="#4aa4ec"/><stop offset="1" stop-color="#1a5ed0"/></linearGradient><linearGradient id="gBoxG" x1="0" y1="0" x2="0" y2="1"><stop offset="0" stop-color="#a8c8dc"/><stop offset="1" stop-color="#d8e8f0"/></linearGradient><linearGradient id="gGrayCube" x1="0" y1="0" x2="0" y2="1"><stop offset="0" stop-color="#d0d4da"/><stop offset="1" stop-color="#a8adb4"/></linearGradient><linearGradient id="gWood" x1="0" y1="0" x2="0" y2="1"><stop offset="0" stop-color="#d8c09a"/><stop offset="1" stop-color="#b89868"/></linearGradient><linearGradient id="gThread" x1="0" y1="0" x2="1" y2="0"><stop offset="0" stop-color="#1a1a1a"/><stop offset="0.45" stop-color="#4a4a4a"/><stop offset="1" stop-color="#151515"/></linearGradient><linearGradient id="gScreen" x1="0" y1="0" x2="0" y2="1"><stop offset="0" stop-color="#7ab4ec"/><stop offset="1" stop-color="#3a78d8"/></linearGradient><linearGradient id="gGearC" x1="0" y1="0" x2="0" y2="1"><stop offset="0" stop-color="#d4dae0"/><stop offset="1" stop-color="#98a2ac"/></linearGradient><linearGradient id="gImg" x1="0" y1="0" x2="0" y2="1"><stop offset="0" stop-color="#10a8e8"/><stop offset="1" stop-color="#0848c0"/></linearGradient><linearGradient id="gShare" x1="0" y1="0" x2="0" y2="1"><stop offset="0" stop-color="#7ad0f4"/><stop offset="0.45" stop-color="#58bcee"/><stop offset="0.5" stop-color="#3aa0e4"/><stop offset="1" stop-color="#1a78d0"/></linearGradient><linearGradient id="gArrow" x1="0" y1="0" x2="0" y2="1"><stop offset="0" stop-color="#ffffff"/><stop offset="1" stop-color="#c8c8c8"/></linearGradient><radialGradient id="gRedPin" cx="0.4" cy="0.3" r="0.7"><stop offset="0" stop-color="#f06040"/><stop offset="1" stop-color="#c01a10"/></radialGradient><radialGradient id="gGlobeShade" cx="0.65" cy="0.35" r="0.8"><stop offset="0" stop-color="#fff" stop-opacity="0"/><stop offset="0.7" stop-color="#000" stop-opacity="0.05"/><stop offset="1" stop-color="#000" stop-opacity="0.3"/></radialGradient><filter id="fSh" x="-20%" y="-20%" width="140%" height="150%"><feDropShadow dx="0" dy="2" stdDeviation="1.5" flood-color="#000" flood-opacity="0.28"/></filter></defs></svg>
<div class="a" style="left:2139px;top:342px;width:653px;height:70px;background:#ececec"></div>
<div class="a" style="left:2172px;top:362px;width:75px;height:35px;background:linear-gradient(#ececec,#e4e4e4);border:2px solid #858585;border-radius:18px"></div>
<svg class="a" style="left:2192px;top:368px;" width="38" height="24" viewBox="0 0 38 24"><g transform="translate(11.5,12)"><rect x="-2.8" y="-10.5" width="5.6" height="21" fill="#333" transform="rotate(0)"/><rect x="-2.8" y="-10.5" width="5.6" height="21" fill="#333" transform="rotate(45)"/><rect x="-2.8" y="-10.5" width="5.6" height="21" fill="#333" transform="rotate(90)"/><rect x="-2.8" y="-10.5" width="5.6" height="21" fill="#333" transform="rotate(135)"/><circle r="7.5" fill="#333"/><circle r="2.6" fill="#e8e8e8"/></g><path d="M25 10 H34 L29.5 16 Z" fill="#333"/></svg>
<div class="a" style="left:2283px;top:362px;width:494px;height:37px;background:#fff;border:1.5px solid #8f8f8f;border-radius:19px;box-shadow:inset 0 1px 1px rgba(0,0,0,0.18)"></div>
<svg class="a" style="left:2290px;top:367px;" width="30" height="30" viewBox="0 0 30 30"><circle cx="11.5" cy="11.5" r="7.3" fill="none" stroke="#555" stroke-width="3.4"/><path d="M17 17 L24.5 24.5" stroke="#555" stroke-width="4" stroke-linecap="round"/></svg>
<div class="a" style="left:2139px;top:412px;width:653px;height:1220px;background:#fcfcfc"></div>
<div class="a" style="left:2138px;top:342px;width:1.5px;height:1550px;background:#d2cfd0"></div>
<div class="a" style="left:2141px;top:540px;width:622px;height:2px;background:#e3e3e3"></div>
<div class="a" style="left:2141px;top:670px;width:622px;height:2px;background:#e3e3e3"></div>
<div class="a" style="left:2141px;top:800px;width:622px;height:2px;background:#e3e3e3"></div>
<div class="a" style="left:2141px;top:930px;width:622px;height:2px;background:#e3e3e3"></div>
<div class="a" style="left:2141px;top:1060px;width:622px;height:2px;background:#e3e3e3"></div>
<div class="a" style="left:2141px;top:1190px;width:622px;height:2px;background:#e3e3e3"></div>
<div class="a" style="left:2141px;top:1320px;width:622px;height:2px;background:#e3e3e3"></div>
<div class="a" style="left:2141px;top:1450px;width:622px;height:2px;background:#e3e3e3"></div>
<div class="a" style="left:2141px;top:1580px;width:622px;height:2px;background:#e3e3e3"></div>
<div class="a" style="left:2294px;top:412px;width:2px;height:1220px;background:#e3e3e3"></div>
<div class="a" style="left:2450px;top:412px;width:2px;height:1220px;background:#e3e3e3"></div>
<div class="a" style="left:2606px;top:412px;width:2px;height:1220px;background:#e3e3e3"></div>
<div class="a" style="left:2762px;top:412px;width:2px;height:1220px;background:#e3e3e3"></div>
<div class="a" style="left:2764px;top:412px;width:28px;height:1220px;background:#fafafa"></div>
<div class="a" style="left:2770px;top:418px;width:16px;height:1031px;background:#c2c2c2;border-radius:8px"></div>
<div class="a" style="left:2141px;top:412px;width:621px;height:1220px;overflow:hidden"><div class="a" style="left:-2141px;top:-412px;width:2904px;height:2108px">
<svg class="a" style="left:2169px;top:444px" width="96" height="64" viewBox="-6 -6 96 64"><rect x="1" y="1" width="82" height="50" rx="12" fill="url(#gBtn)" stroke="#6e6e6e" stroke-width="1.3" filter="url(#fSh)"/></svg>
<svg class="a" style="left:2323px;top:446px" width="100" height="55" viewBox="-6 -6 100 55"><rect x="1" y="1" width="86" height="41" rx="10" fill="url(#gBtn)" stroke="#6e6e6e" stroke-width="1.3" filter="url(#fSh)"/><rect x="28" y="1.6" width="32" height="39.8" fill="url(#gBlue)" stroke="#1a5ea8" stroke-width="0.8"/></svg>
<svg class="a" style="left:2485px;top:432px" width="87" height="87" viewBox="-6 -6 87 87"><rect x="1" y="1" width="73" height="73" rx="9" fill="url(#gBtn2)" stroke="#9a9a9a" stroke-width="1" filter="url(#fSh)"/><polygon points="53.38,33.02 53.80,34.92 58.89,35.31 58.89,39.69 53.80,40.08 51.90,45.56 51.90,45.56 50.85,47.20 54.17,51.07 51.07,54.17 47.20,50.85 41.98,53.38 41.98,53.38 40.08,53.80 39.69,58.89 35.31,58.89 34.92,53.80 29.44,51.90 29.44,51.90 27.80,50.85 23.93,54.17 20.83,51.07 24.15,47.20 21.62,41.98 21.62,41.98 21.20,40.08 16.11,39.69 16.11,35.31 21.20,34.92 23.10,29.44 23.10,29.44 24.15,27.80 20.83,23.93 23.93,20.83 27.80,24.15 33.02,21.62 33.02,21.62 34.92,21.20 35.31,16.11 39.69,16.11 40.08,21.20 45.56,23.10 45.56,23.10 47.20,24.15 51.07,20.83 54.17,23.93 50.85,27.80 53.38,33.02" fill="none" stroke="#222" stroke-width="2.6" stroke-linejoin="round"/><circle cx="37.5" cy="37.5" r="6" fill="none" stroke="#222" stroke-width="2.6"/></svg>
<svg class="a" style="left:2635px;top:430px" width="100" height="92" viewBox="-6 -6 100 92"><rect x="1" y="1" width="86" height="78" rx="6" fill="url(#gWhite)" stroke="#a0a0a0" stroke-width="1" filter="url(#fSh)"/><text x="44" y="61" text-anchor="middle" font-family="Liberation Sans" font-size="47" fill="#1c4a0c" stroke="#1c4a0c" stroke-width="1.3" textLength="72" lengthAdjust="spacingAndGlyphs">9:41</text></svg>
<svg class="a" style="left:2163px;top:552px" width="108" height="107" viewBox="-6 -6 108 107"><g filter="url(#fSh)"><rect x="0" y="6" width="96" height="84" rx="4" fill="url(#gWhite)" stroke="#aaa" stroke-width="1"/><path d="M0 26 V6 Q0 0 6 0 H90 Q96 0 96 6 V22 H0 Z" fill="url(#gRed)"/><rect x="0" y="86" width="96" height="3" fill="#ccc"/><rect x="1" y="90" width="94" height="3" fill="#d8d8d8"/></g><circle cx="17" cy="11" r="4.5" fill="#4a0808"/><circle cx="79" cy="11" r="4.5" fill="#4a0808"/><path d="M23 55 L41 71 L72 40" fill="none" stroke="#4a8e1a" stroke-width="10" stroke-linejoin="miter"/><path d="M26 53 L41 66 L70 38" fill="none" stroke="#6ab028" stroke-width="2" opacity="0.7"/></svg>
<svg class="a" style="left:2325px;top:568px" width="96" height="70" viewBox="-6 -6 96 70"><defs><radialGradient id="gLens" cx="0.55" cy="0.5" r="0.55"><stop offset="0" stop-color="#7ed2f4"/><stop offset="0.7" stop-color="#3aa6e8"/><stop offset="1" stop-color="#1a6cc0"/></radialGradient></defs><g filter="url(#fSh)"><path d="M34.4 8.6 L42 0.6 H57.6 L65.9 8.6 Z" fill="#ececec" stroke="#777" stroke-width="1"/><rect x="0.5" y="8" width="83.4" height="49.5" rx="6" fill="url(#gBtn)" stroke="#6a6a6a" stroke-width="1"/></g><rect x="34.8" y="8.4" width="30.8" height="1.4" fill="#e4e4e4"/><rect x="9.2" y="12.1" width="11.9" height="5.7" rx="2.8" fill="#3a3a3a"/><circle cx="49.8" cy="32" r="19.9" fill="url(#gLens)" stroke="#2a5a90" stroke-width="1"/></svg>
<svg class="a" style="left:2481px;top:558px" width="96" height="96" viewBox="-6 -6 96 96"><clipPath id="cEarth"><circle cx="42" cy="42" r="42"/></clipPath><circle cx="42" cy="42" r="42" fill="url(#gEarth)" filter="url(#fSh)"/><g clip-path="url(#cEarth)"><polygon points="2.3,21.0 11.7,9.3 25.7,2.3 37.3,0.0 46.7,3.5 49.0,11.7 42.0,18.7 37.3,28.0 32.7,37.3 28.0,49.0 22.2,46.7 16.3,37.3 7.0,30.3" fill="#58c81e"/><polygon points="51.3,56.0 65.3,49.0 79.3,53.7 84.0,63.0 79.3,74.7 67.7,86.3 58.3,88.7 53.7,77.0 51.3,65.3" fill="#58c81e"/><polygon points="51.3,-2.3 63.0,0.0 58.3,7.0" fill="#58c81e"/><circle cx="42" cy="42" r="42" fill="url(#gGlobeShade)"/></g><circle cx="42" cy="42" r="20.3" fill="none" stroke="#ececec" stroke-width="7.5"/><path d="M42 10 V73.5 M10 42 H74" stroke="#ececec" stroke-width="7.5"/></svg>
<svg class="a" style="left:2633px;top:572px" width="104" height="58" viewBox="-6 -6 104 58"><rect x="0.5" y="0.5" width="91" height="45" fill="url(#gWhite2)" stroke="#999" stroke-width="1" filter="url(#fSh)"/><text x="46" y="14" text-anchor="middle" font-family="Liberation Sans" font-weight="bold" font-size="5.6" fill="#222" textLength="76" lengthAdjust="spacingAndGlyphs">Something went wrong. Continue?</text><rect x="16" y="24" width="25" height="13" rx="3" fill="#f4f4f4" stroke="#777" stroke-width="0.8"/><text x="28.5" y="33.5" text-anchor="middle" font-family="Liberation Sans" font-size="6.5" fill="#111">Cancel</text><rect x="50" y="24" width="25" height="13" rx="3" fill="#2a8ad8" stroke="#1a5a98" stroke-width="0.8"/><text x="62.5" y="33.5" text-anchor="middle" font-family="Liberation Sans" font-weight="bold" font-size="7" fill="#111">OK</text></svg>
<svg class="a" style="left:2173px;top:686px" width="88" height="98" viewBox="-6 -6 88 98"><rect x="0" y="10" width="76" height="75" rx="12" fill="url(#gShare)" filter="url(#fSh)"/><path d="M38 0 L56 24 H46 L44 56 H32 L30 24 H20 Z" fill="url(#gArrow)" stroke="#aaa" stroke-width="0.8"/></svg>
<svg class="a" style="left:2322px;top:707px" width="102" height="64" viewBox="-6 -6 102 64"><rect x="0.5" y="0.5" width="89" height="51" fill="url(#gWhite)" stroke="#888" stroke-width="1" filter="url(#fSh)"/><rect x="7.5" y="5" width="3.2" height="42" fill="#111"/><path d="M18.7 8.5 Q29.7 8.5 31.7 14.5 Q33.7 8.5 44.7 8.5 M31.7 14.5 V51.4 M18.7 57.4 Q29.7 57.4 31.7 51.4 Q33.7 57.4 44.7 57.4" fill="none" stroke="#111" stroke-width="2.4"/></svg>
<svg class="a" style="left:2480px;top:697px" width="98" height="76" viewBox="-6 -6 98 76"><rect x="0.5" y="0.5" width="85" height="63" fill="#fff" stroke="#888" stroke-width="1" filter="url(#fSh)"/><rect x="68" y="1" width="17" height="62" rx="2" fill="url(#gWhite)" stroke="#aaa" stroke-width="0.8"/><path d="M76.5 4 L82 11 H71 Z M76.5 60 L82 53 H71 Z" fill="#222"/><rect x="68.5" y="17" width="16" height="16" fill="url(#gBlue)"/><path d="M71 22 H82 M71 25 H82 M71 28 H82" stroke="#a8d8f8" stroke-width="0.8"/><rect x="7.5" y="5.5" width="3.2" height="42" fill="#111"/><path d="M17.3 6.6 Q28.7 6.6 30.7 12.6 Q32.7 6.6 44.1 6.6 M30.7 12.6 V50.9 M17.3 56.9 Q28.7 56.9 30.7 50.9 Q32.7 56.9 44.1 56.9" fill="none" stroke="#111" stroke-width="2.4"/></svg>
<div class="t" style="left:2184px;width:1000px;text-align:center;top:697.0px;font-size:75px;color:#151515;font-weight:normal;letter-spacing:-1px;-webkit-text-stroke:1.6px #151515;text-shadow:0 1px 1px rgba(0,0,0,0.3)">Aa</div>
<svg class="a" style="left:2167px;top:822px" width="100" height="88" viewBox="-6 -6 100 88"><rect x="0" y="0" width="88" height="76" fill="#c09a6a" filter="url(#fSh)"/><rect x="2.5" y="2.5" width="83" height="71" fill="none" stroke="#9a7448" stroke-width="1"/><rect x="7" y="9" width="74" height="59" fill="#ececec"/><path d="M68 15 Q72 14 70 18 L36 55 L31 51 Z" fill="#d8201a"/><path d="M31 51 L36 55 L32 60 L27 56 Z" fill="#9aa4b0"/><path d="M27 56 L32 60 Q26 66 19 66 Q22 60 27 56 Z" fill="#8a5a2a"/></svg>
<svg class="a" style="left:2324px;top:823px" width="98" height="84" viewBox="-6 -6 98 84"><ellipse cx="43" cy="36" rx="42.5" ry="35.5" fill="url(#gWhite2)" stroke="#444" stroke-width="1" filter="url(#fSh)"/></svg>
<svg class="a" style="left:2480px;top:819px" width="98" height="90" viewBox="-6 -6 98 90"><rect x="0.5" y="0.5" width="85" height="77" fill="url(#gWhite2)" stroke="#555" stroke-width="1" filter="url(#fSh)"/></svg>
<div class="a" style="left:2640.0px;top:861px;width:10px;height:10px;background:#555;border-radius:5px"></div>
<div class="a" style="left:2656.2px;top:861px;width:10px;height:10px;background:#555;border-radius:5px"></div>
<div class="a" style="left:2672.4px;top:861px;width:10px;height:10px;background:#555;border-radius:5px"></div>
<div class="a" style="left:2688.6px;top:861px;width:10px;height:10px;background:#555;border-radius:5px"></div>
<div class="a" style="left:2704.8px;top:861px;width:10px;height:10px;background:#555;border-radius:5px"></div>
<div class="a" style="left:2721.0px;top:861px;width:10px;height:10px;background:#555;border-radius:5px"></div>
<svg class="a" style="left:2167px;top:966px" width="100" height="56" viewBox="-6 -6 100 56"><rect x="0.5" y="0.5" width="87" height="43" rx="8" fill="url(#gBtn)" stroke="#777" stroke-width="1" filter="url(#fSh)"/><path d="M8.5 1 H56 V43 H8.5 Q1 43 1 35.5 V8.5 Q1 1 8.5 1 Z" fill="url(#gBlue)"/><rect x="55.5" y="1" width="1" height="42" fill="#555"/></svg>
<svg class="a" style="left:2323px;top:946px" width="100" height="100" viewBox="-6 -6 100 100"><line x1="44.0" y1="18.0" x2="44.0" y2="3.0" stroke="#8a8a8a" stroke-width="9" stroke-linecap="round"/><line x1="57.0" y1="21.5" x2="64.5" y2="8.5" stroke="#e0e0e0" stroke-width="9" stroke-linecap="round"/><line x1="66.5" y1="31.0" x2="79.5" y2="23.5" stroke="#e0e0e0" stroke-width="9" stroke-linecap="round"/><line x1="70.0" y1="44.0" x2="85.0" y2="44.0" stroke="#e0e0e0" stroke-width="9" stroke-linecap="round"/><line x1="66.5" y1="57.0" x2="79.5" y2="64.5" stroke="#e0e0e0" stroke-width="9" stroke-linecap="round"/><line x1="57.0" y1="66.5" x2="64.5" y2="79.5" stroke="#e0e0e0" stroke-width="9" stroke-linecap="round"/><line x1="44.0" y1="70.0" x2="44.0" y2="85.0" stroke="#e0e0e0" stroke-width="9" stroke-linecap="round"/><line x1="31.0" y1="66.5" x2="23.5" y2="79.5" stroke="#d0d0d0" stroke-width="9" stroke-linecap="round"/><line x1="21.5" y1="57.0" x2="8.5" y2="64.5" stroke="#c8c8c8" stroke-width="9" stroke-linecap="round"/><line x1="18.0" y1="44.0" x2="3.0" y2="44.0" stroke="#b0b0b0" stroke-width="9" stroke-linecap="round"/><line x1="21.5" y1="31.0" x2="8.5" y2="23.5" stroke="#9c9c9c" stroke-width="9" stroke-linecap="round"/><line x1="31.0" y1="21.5" x2="23.5" y2="8.5" stroke="#8e8e8e" stroke-width="9" stroke-linecap="round"/></svg>
<svg class="a" style="left:2477px;top:969px" width="104" height="53" viewBox="-6 -6 104 53"><rect x="0.5" y="13" width="91" height="13.5" rx="6.7" fill="#6e6e6e" stroke="#333" stroke-width="1"/><circle cx="32.5" cy="20.3" r="20" fill="url(#gBlue)" stroke="#1a5aa0" stroke-width="1" filter="url(#fSh)"/></svg>
<svg class="a" style="left:2637px;top:964px" width="94" height="62" viewBox="-6 -6 94 62"><rect x="0" y="0" width="82" height="50" rx="25" fill="url(#gGreenSw)"/><circle cx="57" cy="25" r="22" fill="#fff" stroke="#5ab81a" stroke-width="2"/></svg>
<svg class="a" style="left:2170px;top:1081px" width="94" height="88" viewBox="-6 -6 94 88"><rect x="0.5" y="0.5" width="81" height="75" rx="9" fill="url(#gWhite2)" stroke="#666" stroke-width="1" filter="url(#fSh)"/><text x="41" y="50" text-anchor="middle" font-family="Liberation Sans" font-weight="bold" font-size="31" fill="#2a2a2a">&lt;A&gt;</text></svg>
<svg class="a" style="left:2326px;top:1082px" width="94" height="88" viewBox="-6 -6 94 88"><rect x="0.5" y="0.5" width="81" height="75" rx="10" fill="url(#gWhite2)" stroke="#888" stroke-width="1" filter="url(#fSh)"/><path d="M7 17 L66 10 L70 60 L11 66 Z" fill="#f4f4f4" stroke="#aaa" stroke-width="1"/><path d="M28 15 L64 11 L65 19 L29 23 Z" fill="#1ec840"/><rect x="11" y="18" width="62" height="48" fill="#f8f8f8" stroke="#999" stroke-width="1"/><rect x="18" y="25" width="47" height="34" fill="url(#gImg)"/></svg>
<svg class="a" style="left:2478px;top:1074px" width="102" height="103" viewBox="-6 -6 102 103"><defs><linearGradient id="gMapF" x1="0" y1="0" x2="0" y2="1"><stop offset="0" stop-color="#f4f4f4"/><stop offset="1" stop-color="#c8c8c8"/></linearGradient><clipPath id="cMap"><path d="M5 28 Q45 46 84.8 28 V75.7 Q45 93 5 75.7 Z"/></clipPath></defs><path d="M0 18.6 Q45 44 89.6 18.6 V80.5 Q45 100 0 80.5 Z" fill="url(#gMapF)" stroke="#b4b4b4" stroke-width="1" filter="url(#fSh)"/><g clip-path="url(#cMap)"><rect x="0" y="20" width="90" height="80" fill="#e6e2da"/><path d="M0 46 Q25 40 50 42 Q70 36 90 36 V52 Q75 50 60 54 Q35 60 20 70 Q10 72 0 73 Z" fill="#8fafd0"/><path d="M0 76 Q40 70 90 60 V68 Q45 78 0 85 Z" fill="#f2ec70" stroke="#c8c098" stroke-width="0.5"/><path d="M26 56 L32 54 L38 78 L31 80 Z M58 76 L64 74 L68 90 L61 92 Z" fill="#fff" stroke="#c0b8a0" stroke-width="0.5"/></g><path d="M45 75 Q42 52 31 38 Q25 30 25 20 A20 20 0 0 1 65 20 Q65 30 59 38 Q48 52 45 75 Z" fill="url(#gRedPin)" stroke="#a01010" stroke-width="0.6" filter="url(#fSh)"/><circle cx="45" cy="19.5" r="6.5" fill="#1a1a1a"/><ellipse cx="44" cy="17.5" rx="3" ry="2" fill="#555" opacity="0.6"/></svg>
<svg class="a" style="left:2638px;top:1084px" width="94" height="85" viewBox="-6 -6 94 85"><rect x="0.5" y="0.5" width="81" height="72" fill="#fff" stroke="#888" stroke-width="1" filter="url(#fSh)"/><rect x="1" y="1" width="80" height="11" fill="#efefef"/><text x="3" y="8.5" font-family="Liberation Sans" font-size="6" fill="#aaa">Apples</text><text x="3" y="20.5" font-family="Liberation Sans" font-weight="bold" font-size="6" fill="#111">Macintosh</text><text x="76" y="20.8" font-family="Liberation Sans" font-size="6" fill="#999">›</text><rect x="1" y="24" width="80" height="0.6" fill="#ddd"/><rect x="1" y="25" width="80" height="11" fill="#efefef"/><text x="3" y="32.5" font-family="Liberation Sans" font-size="6" fill="#aaa">Oranges</text><text x="3" y="44.5" font-family="Liberation Sans" font-weight="bold" font-size="6" fill="#111">Navel</text><text x="76" y="44.8" font-family="Liberation Sans" font-size="6" fill="#999">›</text><rect x="1" y="48" width="80" height="0.6" fill="#ddd"/><text x="3" y="56.5" font-family="Liberation Sans" font-weight="bold" font-size="6" fill="#111">Mandarin</text><text x="76" y="56.8" font-family="Liberation Sans" font-size="6" fill="#999">›</text><rect x="1" y="60" width="80" height="0.6" fill="#ddd"/><text x="3" y="68.5" font-family="Liberation Sans" font-weight="bold" font-size="6" fill="#111">Blood</text><text x="76" y="68.8" font-family="Liberation Sans" font-size="6" fill="#999">›</text><rect x="1" y="72" width="80" height="0.6" fill="#ddd"/></svg>
<svg class="a" style="left:2168px;top:1207px" width="98" height="98" viewBox="-6 -6 98 98"><rect x="0.5" y="0.5" width="85" height="85" rx="6" fill="url(#gWhite2)" stroke="#999" stroke-width="1" filter="url(#fSh)"/><rect x="72" y="7" width="9" height="66" rx="4.5" fill="#ddd"/><rect x="72.5" y="25" width="8" height="46" rx="4" fill="#bbb"/><rect x="6" y="73" width="64" height="9" rx="4.5" fill="#ddd"/><rect x="24" y="73.5" width="45" height="8" rx="4" fill="#c4c4c4"/></svg>
<svg class="a" style="left:2320px;top:1211px" width="106" height="92" viewBox="-6 -6 106 92"><rect x="0" y="0" width="94" height="68" rx="4" fill="#111" filter="url(#fSh)"/><rect x="8" y="6" width="78" height="56" fill="url(#gScreen)"/><path d="M38 22 V47 L61 34.5 Z" fill="#111"/><circle cx="9" cy="64.5" r="2" fill="#3c3"/><path d="M40 68 H54 L57 74 H37 Z" fill="#111"/><ellipse cx="47" cy="76" rx="25" ry="4" fill="#111"/></svg>
<svg class="a" style="left:2487px;top:1203px" width="86" height="101" viewBox="-6 -6 86 101"><circle cx="37" cy="6" r="5" fill="none" stroke="#999" stroke-width="3"/><rect x="34" y="10" width="6" height="6" fill="#999"/><circle cx="37" cy="52" r="36" fill="#9a9a9a" filter="url(#fSh)"/><circle cx="37" cy="52" r="31" fill="url(#gWhite)"/><path d="M37 52 V22 A30 30 0 0 1 66 51 Z" fill="#e82020" opacity="0.9"/><line x1="37.0" y1="27.0" x2="37.0" y2="23.0" stroke="#111" stroke-width="1.6"/><line x1="49.5" y1="30.3" x2="51.5" y2="26.9" stroke="#111" stroke-width="1.6"/><line x1="58.7" y1="39.5" x2="62.1" y2="37.5" stroke="#111" stroke-width="1.6"/><line x1="62.0" y1="52.0" x2="66.0" y2="52.0" stroke="#111" stroke-width="1.6"/><line x1="58.7" y1="64.5" x2="62.1" y2="66.5" stroke="#111" stroke-width="1.6"/><line x1="49.5" y1="73.7" x2="51.5" y2="77.1" stroke="#111" stroke-width="1.6"/><line x1="37.0" y1="77.0" x2="37.0" y2="81.0" stroke="#111" stroke-width="1.6"/><line x1="24.5" y1="73.7" x2="22.5" y2="77.1" stroke="#111" stroke-width="1.6"/><line x1="15.3" y1="64.5" x2="11.9" y2="66.5" stroke="#111" stroke-width="1.6"/><line x1="12.0" y1="52.0" x2="8.0" y2="52.0" stroke="#111" stroke-width="1.6"/><line x1="15.3" y1="39.5" x2="11.9" y2="37.5" stroke="#111" stroke-width="1.6"/><line x1="24.5" y1="30.3" x2="22.5" y2="26.9" stroke="#111" stroke-width="1.6"/><path d="M37 52 L66 51" stroke="#111" stroke-width="2.5"/><circle cx="37" cy="52" r="4" fill="#111"/></svg>
<svg class="a" style="left:2643px;top:1206px" width="84" height="100" viewBox="-6 -6 84 100"><clipPath id="cg26491212"><circle cx="36" cy="36" r="35"/></clipPath><circle cx="36" cy="36" r="35" fill="url(#gGlobeGray)" filter="url(#fSh)"/><g clip-path="url(#cg26491212)"><polygon points="11.7,11.1 19.5,6.8 30.7,7.5 36.0,2.2 43.8,2.9 51.5,5.2 44.8,9.8 45.5,17.6 40.8,25.3 37.8,32.4 34.8,37.2 28.9,37.2 27.7,40.8 37.2,44.9 42.5,47.9 33.7,46.7 23.0,43.1 17.5,36.0 14.6,27.7 13.6,17.0" fill="#f2f2f2"/><polygon points="34.8,37.2 39.9,38.9 42.5,40.9 37.9,41.8 34.1,39.9" fill="#f2f2f2"/><polygon points="43.7,45.5 51.5,43.7 66.8,44.9 65.1,53.8 57.4,62.7 49.0,68.7 50.2,61.5 44.3,55.0" fill="#f2f2f2"/><circle cx="36" cy="36" r="35" fill="url(#gGlobeShade)"/></g><circle cx="36" cy="36" r="35" fill="none" stroke="#7a7a7a" stroke-width="0.8"/><rect x="34" y="71" width="4" height="11" fill="#111"/><rect x="1" y="81" width="70" height="6" rx="3" fill="#111"/></svg>
<svg class="a" style="left:2167px;top:1335px" width="102" height="102" viewBox="-6 -6 102 102"><circle cx="45" cy="45" r="44.5" fill="url(#gGearC)" stroke="#8a96a2" stroke-width="1" filter="url(#fSh)"/><circle cx="45" cy="45" r="36.5" fill="#f4f6f8" stroke="#a8b2bc" stroke-width="1"/><polygon points="39.44,24.23 39.08,15.90 50.92,15.90 50.56,24.23 55.75,26.38 61.39,20.23 69.77,28.61 63.62,34.25 65.77,39.44 74.10,39.08 74.10,50.92 65.77,50.56 63.62,55.75 69.77,61.39 61.39,69.77 55.75,63.62 50.56,65.77 50.92,74.10 39.08,74.10 39.44,65.77 34.25,63.62 28.61,69.77 20.23,61.39 26.38,55.75 24.23,50.56 15.90,50.92 15.90,39.08 24.23,39.44 26.38,34.25 20.23,28.61 28.61,20.23 34.25,26.38" fill="url(#gGearC)" stroke="#8a96a2" stroke-width="0.8" stroke-linejoin="round"/><circle cx="45" cy="45" r="7" fill="#f4f6f8" stroke="#8a96a2" stroke-width="0.8"/></svg>
<svg class="a" style="left:2324px;top:1336px" width="101" height="102" viewBox="-6 -6 101 102"><ellipse cx="40" cy="72" rx="40" ry="12" fill="url(#gWood)" filter="url(#fSh)"/><rect x="10" y="17" width="60" height="55" fill="url(#gThread)"/><path d="M14 60 Q0 66 14 72 M70 58 Q96 66 86 76 Q78 82 66 86" fill="none" stroke="#111" stroke-width="2"/><ellipse cx="40" cy="14" rx="40" ry="12" fill="url(#gWood)"/><ellipse cx="40" cy="13" rx="39" ry="10" fill="#dcc8a4"/><ellipse cx="40" cy="12" rx="6" ry="3" fill="#111"/></svg>
<svg class="a" style="left:2487px;top:1336px" width="84" height="100" viewBox="-6 -6 84 100"><clipPath id="cg24931342"><circle cx="36" cy="36" r="35"/></clipPath><circle cx="36" cy="36" r="35" fill="url(#gGlobeGray)" filter="url(#fSh)"/><g clip-path="url(#cg24931342)"><polygon points="11.7,11.1 19.5,6.8 30.7,7.5 36.0,2.2 43.8,2.9 51.5,5.2 44.8,9.8 45.5,17.6 40.8,25.3 37.8,32.4 34.8,37.2 28.9,37.2 27.7,40.8 37.2,44.9 42.5,47.9 33.7,46.7 23.0,43.1 17.5,36.0 14.6,27.7 13.6,17.0" fill="#f2f2f2"/><polygon points="34.8,37.2 39.9,38.9 42.5,40.9 37.9,41.8 34.1,39.9" fill="#f2f2f2"/><polygon points="43.7,45.5 51.5,43.7 66.8,44.9 65.1,53.8 57.4,62.7 49.0,68.7 50.2,61.5 44.3,55.0" fill="#f2f2f2"/><circle cx="36" cy="36" r="35" fill="url(#gGlobeShade)"/></g><circle cx="36" cy="36" r="35" fill="none" stroke="#7a7a7a" stroke-width="0.8"/><rect x="34" y="71" width="4" height="11" fill="#111"/><rect x="1" y="81" width="70" height="6" rx="3" fill="#111"/></svg>
<svg class="a" style="left:2643px;top:1336px" width="84" height="100" viewBox="-6 -6 84 100"><clipPath id="cg26491342"><circle cx="36" cy="36" r="35"/></clipPath><circle cx="36" cy="36" r="35" fill="url(#gGlobeGray)" filter="url(#fSh)"/><g clip-path="url(#cg26491342)"><polygon points="11.7,11.1 19.5,6.8 30.7,7.5 36.0,2.2 43.8,2.9 51.5,5.2 44.8,9.8 45.5,17.6 40.8,25.3 37.8,32.4 34.8,37.2 28.9,37.2 27.7,40.8 37.2,44.9 42.5,47.9 33.7,46.7 23.0,43.1 17.5,36.0 14.6,27.7 13.6,17.0" fill="#f2f2f2"/><polygon points="34.8,37.2 39.9,38.9 42.5,40.9 37.9,41.8 34.1,39.9" fill="#f2f2f2"/><polygon points="43.7,45.5 51.5,43.7 66.8,44.9 65.1,53.8 57.4,62.7 49.0,68.7 50.2,61.5 44.3,55.0" fill="#f2f2f2"/><circle cx="36" cy="36" r="35" fill="url(#gGlobeShade)"/></g><circle cx="36" cy="36" r="35" fill="none" stroke="#7a7a7a" stroke-width="0.8"/><rect x="34" y="71" width="4" height="11" fill="#111"/><rect x="1" y="81" width="70" height="6" rx="3" fill="#111"/></svg>
<svg class="a" style="left:2169px;top:1468px" width="96" height="96" viewBox="-6 -6 96 96"><clipPath id="cBG"><circle cx="42" cy="42" r="42"/></clipPath><circle cx="42" cy="42" r="42" fill="url(#gGlobeBlue)" filter="url(#fSh)"/><g clip-path="url(#cBG)"><polygon points="12.8,12.1 22.2,7.0 35.6,7.8 42.0,1.4 51.3,2.3 60.5,5.0 52.5,10.5 53.4,19.9 47.7,29.2 44.1,37.7 40.6,43.4 33.5,43.4 32.1,47.7 43.4,52.7 49.8,56.2 39.2,54.8 26.4,50.5 19.8,42.0 16.3,32.1 15.2,19.2" fill="#c4ecf8"/><polygon points="40.6,43.4 46.7,45.5 49.8,47.8 44.3,49.0 39.7,46.7" fill="#c4ecf8"/><polygon points="51.2,53.4 60.5,51.2 79.0,52.7 76.9,63.4 67.7,74.1 57.6,81.2 59.0,72.6 51.9,64.8" fill="#c4ecf8"/><circle cx="42" cy="42" r="42" fill="url(#gGlobeShade)"/></g></svg>
<svg class="a" style="left:2320px;top:1469px" width="106" height="89" viewBox="-6 -6 106 89"><path d="M8 2 Q8 0 12 0 H38 Q42 0 46 6 L50 12 H82 Q86 12 86 16 V40 H8 Z" fill="url(#gFolderB)" stroke="#6aa8d0" stroke-width="1"/><path d="M0 26 Q0 22 4 22 H90 Q94 22 94 26 L88 73 Q88 77 84 77 H10 Q6 77 6 73 Z" fill="url(#gFolder)" stroke="#5a9ccc" stroke-width="1" filter="url(#fSh)"/></svg>
<svg class="a" style="left:2485px;top:1464px" width="90" height="103" viewBox="-6 -6 90 103"><polygon points="39,0 78,23 39,46 0,23" fill="url(#gCubeT)"/><polygon points="0,23 39,46 39,91 0,68" fill="url(#gCubeL)"/><polygon points="39,46 78,23 78,68 39,91" fill="url(#gCubeR)"/><polyline points="0,23 39,46 78,23" fill="none" stroke="#aee4ff" stroke-width="1.2"/><line x1="39" y1="46" x2="39" y2="91" stroke="#aee4ff" stroke-width="1.2"/></svg>
<svg class="a" style="left:2637px;top:1462px" width="95" height="104" viewBox="-6 -6 95 104"><polygon points="5,32 41.5,52 41.5,92 5,72" fill="#b8d4e4" opacity="0.9"/><polygon points="41.5,52 78,32 78,72 41.5,92" fill="#c8e0ec" opacity="0.9"/><polyline points="5,72 41.5,92 78,72" fill="none" stroke="#a0c0d4" stroke-width="1"/><polygon points="41.5,0 83,22 41.5,44 0,22" fill="url(#gLidT)"/><polygon points="0,22 41.5,44 41.5,52 0,30" fill="#2a6ac8"/><polygon points="41.5,44 83,22 83,30 41.5,52" fill="#1a5ab8"/></svg>
<svg class="a" style="left:2170px;top:1604px" width="94" height="82" viewBox="-6 -6 94 82"><rect x="0.5" y="0.5" width="81" height="72" fill="#fff" stroke="#aaa" stroke-width="1"/><rect x="1" y="1" width="80" height="11" fill="#efefef"/><text x="3" y="9.5" font-family="Liberation Sans" font-size="6" fill="#bbb">Apples</text><text x="3" y="21.5" font-family="Liberation Sans" font-size="6" fill="#999">Macintosh</text></svg>
<svg class="a" style="left:2336px;top:1594px" width="78" height="102" viewBox="-6 -6 78 102"><path d="M0.5 0.5 H34 Q58 14 66 30 V90 H0.5 Z" fill="#fff" stroke="#888" stroke-width="1"/><path d="M34 0.5 Q40 20 66 30 Q52 22 34 0.5 Z" fill="#bbb"/></svg>
<svg class="a" style="left:2485px;top:1594px" width="90" height="102" viewBox="-6 -6 90 102"><polygon points="39,0 78,23 39,46 0,23" fill="url(#gGrayCube)" stroke="#8a9098" stroke-width="0.8"/><polygon points="0,23 39,46 39,91 0,68" fill="#a4aab2"/><polygon points="39,46 78,23 78,68 39,91" fill="#b4bac2"/></svg>
<svg class="a" style="left:2641px;top:1606px" width="87" height="90" viewBox="-6 -6 87 90"><path d="M0.5 10 Q0.5 0.5 10 0.5 H65 Q74.5 0.5 74.5 10 V80 H0.5 Z" fill="#fff" stroke="#777" stroke-width="1"/><path d="M0.8 10 Q0.8 0.8 10 0.8 H65 Q74.2 0.8 74.2 10 V13 H0.8 Z" fill="#e4e4e4"/><text x="6" y="10" font-family="Liberation Sans" font-size="10" fill="#111">×◻⁻</text></svg>
</div></div>
<div class="a" style="left:2141px;top:1632px;width:651px;height:2px;background:#b4b1b2"></div>
<div class="a" style="left:2141px;top:1634px;width:651px;height:26px;background:#f2eeee"></div>
<div class="a" style="left:2141px;top:1660px;width:651px;height:2px;background:#b4b1b2"></div>
<div class="a" style="left:2457px;top:1640px;width:20px;height:2px;background:#777"></div>
<div class="a" style="left:2457px;top:1646px;width:20px;height:2px;background:#777"></div>
<div class="a" style="left:2457px;top:1652px;width:20px;height:2px;background:#777"></div>
<div class="a" style="left:2141px;top:1662px;width:651px;height:228px;background:#fefefe"></div>
<div class="a" style="left:112px;top:1892px;width:2680px;height:67px;background:#f3efef"></div>
<div class="a" style="left:112px;top:1891px;width:2680px;height:2px;background:#bcb9ba"></div>
<div class="a" style="left:112px;top:1958px;width:2680px;height:1px;background:#b8b5b6"></div>
<svg class="a" style="left:1366px;top:1910px;" width="38" height="38" viewBox="0 0 38 38"><circle cx="14.5" cy="14.5" r="10.5" fill="none" stroke="#777" stroke-width="3.6"/><path d="M22 22 L33 33" stroke="#777" stroke-width="4.4" stroke-linecap="round"/></svg>
<svg class="a" style="left:1428px;top:1908px;" width="42" height="40" viewBox="0 0 42 40"><path d="M21 3 L39 36 H3 Z" fill="#777" stroke="#777" stroke-width="2" stroke-linejoin="round"/><rect x="19" y="13" width="4.2" height="13" rx="1.5" fill="#f3efef"/><circle cx="21.1" cy="30.5" r="2.4" fill="#f3efef"/></svg>
<svg class="a" style="left:1497px;top:1908px;" width="40" height="38" viewBox="0 0 40 38"><circle cx="7" cy="31.8" r="3" fill="#777"/><path d="M4.2 23.3 A11.7 11.7 0 0 1 15.9 35" fill="none" stroke="#777" stroke-width="4"/><path d="M4.2 13.2 A21.8 21.8 0 0 1 26 35" fill="none" stroke="#777" stroke-width="4"/><path d="M4.2 5.3 A29.7 29.7 0 0 1 33.9 35" fill="none" stroke="#777" stroke-width="4"/></svg>
<div class="t" style="left:1752.5px;width:1000px;text-align:right;top:1917.3px;font-size:24.8px;color:#8a8a8a;font-weight:normal;">Xojo 2020 Release 2 Build 51416</div>
</div></div>
</body></html>
